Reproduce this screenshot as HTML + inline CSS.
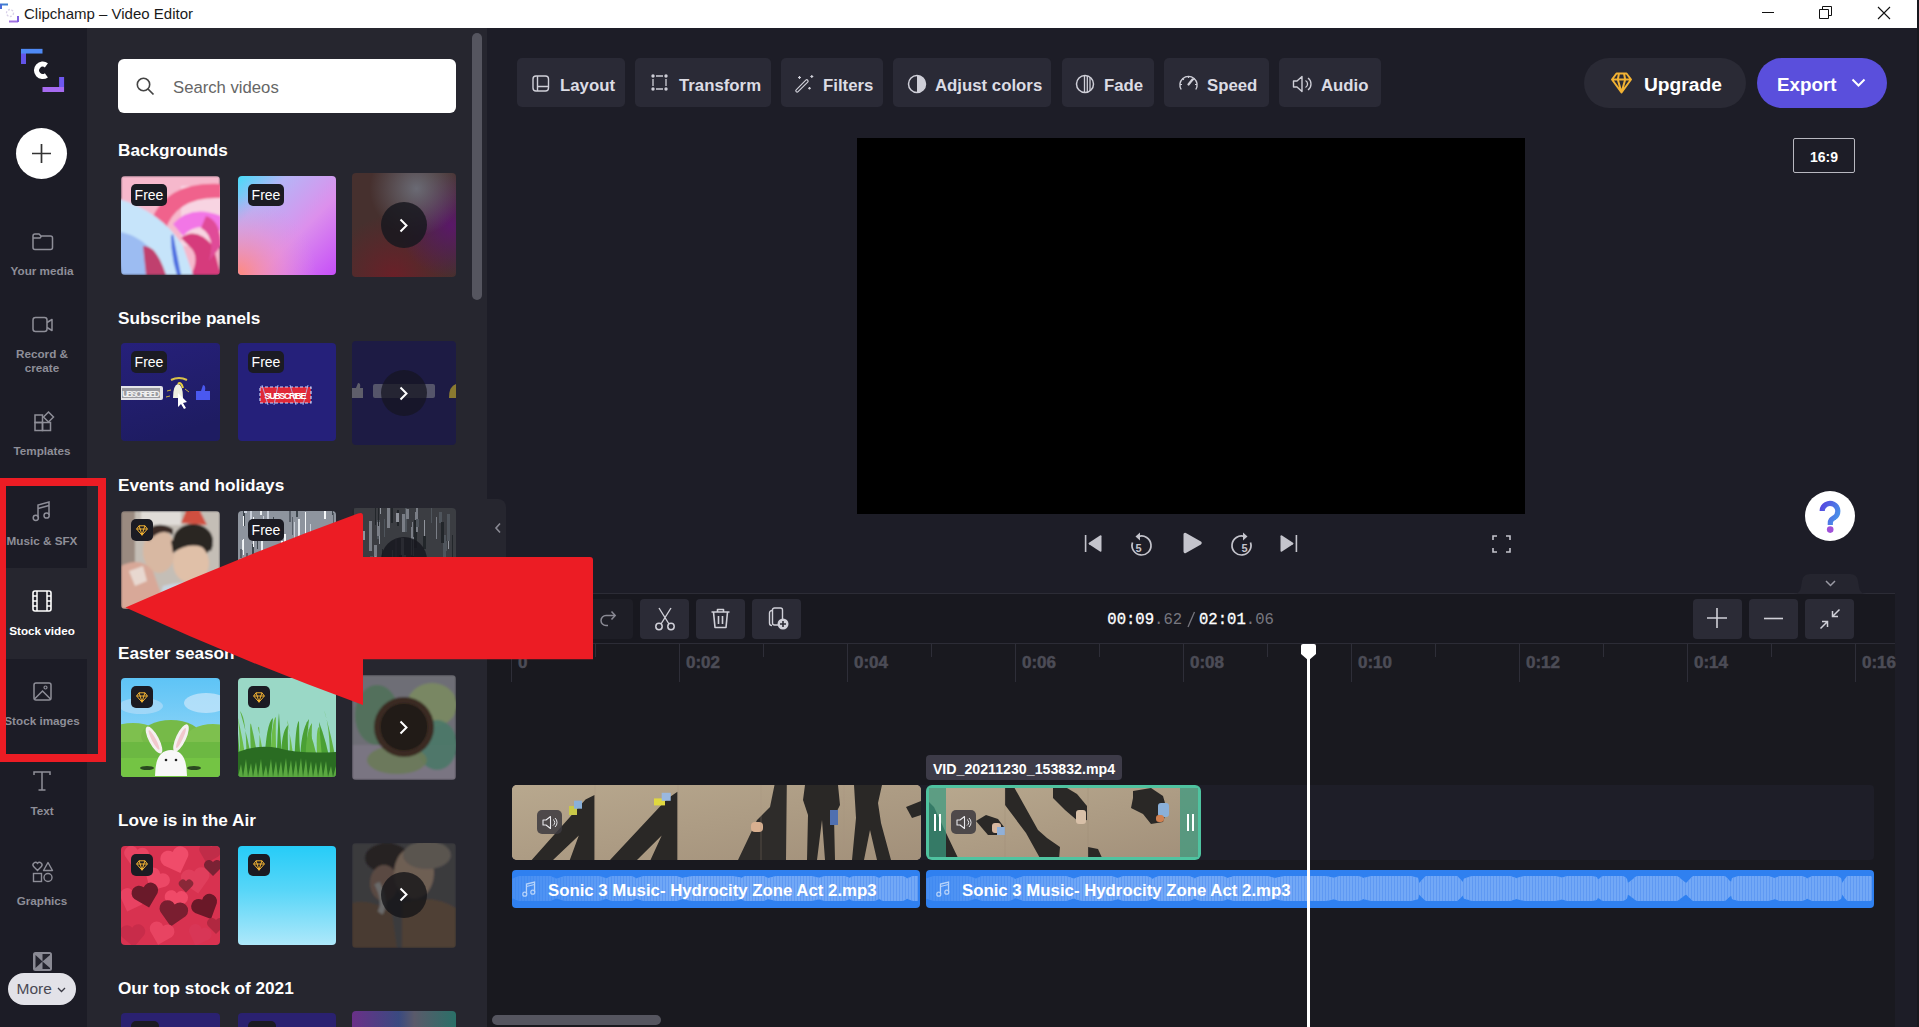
<!DOCTYPE html>
<html><head><meta charset="utf-8">
<style>
*{margin:0;padding:0;box-sizing:border-box}
html,body{width:1919px;height:1027px;overflow:hidden;background:#1e1e28;font-family:"Liberation Sans",sans-serif;position:relative}
.a{position:absolute}
svg{position:absolute;overflow:visible}
#title{left:0;top:0;width:1919px;height:28px;background:#fff}
#nav{left:0;top:28px;width:87px;height:999px;background:#1c1c26}
#panel{left:87px;top:28px;width:400px;height:999px;background:#26262f}
#main{left:487px;top:28px;width:1430px;height:999px;background:#1d1d27}
#tl{left:487px;top:594px;width:1408px;height:433px;background:#19191f}
#edge{left:1917px;top:0;width:2px;height:1027px;background:#18181e}
.nl{left:0;width:84px;text-align:center;font-size:11.7px;font-weight:bold;color:#8e8e98;line-height:14px}
.h{left:118px;font-size:17.2px;font-weight:bold;color:#fff;white-space:nowrap;line-height:20px}
.th{border-radius:4px;overflow:hidden}
.free{position:absolute;left:10px;top:8px;width:36px;height:22px;border-radius:5px;background:#1b1b23;color:#fff;font-size:14px;line-height:22px;text-align:center}
.dia{position:absolute;left:10px;top:8px;width:22px;height:22px;border-radius:5px;background:#1b1b23}
.chev{position:absolute;left:29px;top:29px;width:46px;height:46px;border-radius:50%;background:rgba(24,24,30,.85)}
.tb{top:58px;height:49px;border-radius:5px;background:#2a2a36;color:#dcdce4;font-size:16.8px;font-weight:bold;line-height:49px;white-space:nowrap}
.tb span{position:absolute;top:2.5px}
.rl{top:653px;font-size:17px;font-weight:bold;color:#4c4c56;-webkit-text-stroke:0.5px #4c4c56;line-height:20px}
.tk{width:1px;background:#2e2e38}
.ib{top:599px;width:49px;height:40px;border-radius:4px;background:#2b2b36}
</style></head><body>
<div class="a" id="title"></div>
<div class="a" id="nav"></div>
<div class="a" id="panel"></div>
<div class="a" id="main"></div>
<div class="a" id="tl"></div>
<div class="a" id="edge"></div>
<!-- TITLE BAR -->
<svg style="left:0;top:0" width="20" height="24"><path d="M0 4.5h8" stroke="#3f7fd0" stroke-width="2"/><path d="M1 4v5" stroke="#4a6ad8" stroke-width="2"/><path d="M9 21.5h9" stroke="#a070e0" stroke-width="2"/><path d="M18 16v6" stroke="#8060e0" stroke-width="2"/><circle cx="10" cy="13" r="3.5" fill="none" stroke="#d8d0e8" stroke-width="1.3" stroke-dasharray="2 1.5"/></svg>
<div class="a" style="left:24px;top:5px;font-size:15px;color:#1a1a1a;line-height:17px;white-space:nowrap">Clipchamp – Video Editor</div>
<svg style="left:1762px;top:12px" width="14" height="2"><path d="M0 0.5h12" stroke="#111" stroke-width="1"/></svg>
<svg style="left:1819px;top:6px" width="14" height="14"><path d="M0.5 3.5h9v9h-9z M3.5 3.5v-3h9v9h-3" fill="none" stroke="#111" stroke-width="1"/></svg>
<svg style="left:1878px;top:7px" width="14" height="14"><path d="M0 0L12 12M12 0L0 12" stroke="#111" stroke-width="1.1"/></svg>
<!-- NAV -->
<svg style="left:0;top:0" width="87" height="110">
<path d="M23.5 49v15" stroke="#6254e8" stroke-width="5"/><path d="M21 51.2h21.5" stroke="#4f8af5" stroke-width="4.7"/>
<path d="M61.6 77v15" stroke="#6f58f0" stroke-width="5"/><path d="M42.5 89.5h21.5" stroke="#a66af0" stroke-width="5"/>
<path d="M46.4 65.3A6.2 6.2 0 1 0 46.4 75.3" fill="none" stroke="#fff" stroke-width="5.2"/>
</svg>
<div class="a" style="left:16px;top:128px;width:51px;height:51px;border-radius:50%;background:#fff"></div>
<svg style="left:31px;top:143px" width="22" height="22"><path d="M10.5 1v19M1 10.5h19" stroke="#333" stroke-width="1.7"/></svg>

<svg style="left:32px;top:233px" width="22" height="18"><path d="M1 3a2 2 0 0 1 2-2h4l2 2h9.5a2 2 0 0 1 2 2v9.5a2 2 0 0 1-2 2h-15.5a2 2 0 0 1-2-2z M1 5h7l1.5-2" fill="none" stroke="#8e8e98" stroke-width="1.5"/></svg>
<div class="a nl" style="top:264px">Your media</div>
<svg style="left:32px;top:316px" width="22" height="18"><rect x="1" y="1.5" width="14" height="14" rx="2.5" fill="none" stroke="#8e8e98" stroke-width="1.5"/><path d="M15 6.5l5-3v11l-5-3" fill="none" stroke="#8e8e98" stroke-width="1.5" stroke-linejoin="round"/></svg>
<div class="a nl" style="top:347px">Record &amp;<br>create</div>
<svg style="left:33.5px;top:411px" width="22" height="21"><rect x="1" y="4" width="7.5" height="7.5" fill="none" stroke="#8e8e98" stroke-width="1.5"/><rect x="1" y="11.5" width="7.5" height="8" fill="none" stroke="#8e8e98" stroke-width="1.5"/><rect x="8.5" y="11.5" width="8" height="8" fill="none" stroke="#8e8e98" stroke-width="1.5"/><path d="M14.5 1l5 5-5 5-5-5z" fill="none" stroke="#8e8e98" stroke-width="1.5"/></svg>
<div class="a nl" style="top:444px">Templates</div>

<div class="a" style="left:6px;top:486px;width:81px;height:82px;background:#1c1c26"></div>
<div class="a" style="left:6px;top:568px;width:81px;height:91px;background:#26262f"></div>
<div class="a" style="left:6px;top:659px;width:81px;height:94px;background:#1c1c26"></div>
<svg style="left:32px;top:500px" width="20" height="22"><path d="M6 17.5V5l11-3v13" fill="none" stroke="#8e8e98" stroke-width="1.5"/><path d="M6 8.5l11-3" stroke="#8e8e98" stroke-width="1.5"/><circle cx="3.8" cy="17.8" r="2.6" fill="none" stroke="#8e8e98" stroke-width="1.5"/><circle cx="14.6" cy="15.5" r="2.6" fill="none" stroke="#8e8e98" stroke-width="1.5"/></svg>
<div class="a nl" style="top:534px">Music &amp; SFX</div>
<svg style="left:32px;top:590px" width="20" height="22"><rect x="1" y="1" width="18" height="20" rx="2" fill="none" stroke="#fff" stroke-width="1.6"/><path d="M5 1v20M15 1v20M1 6h4M1 11h4M1 16h4M15 6h4M15 11h4M15 16h4" stroke="#fff" stroke-width="1.5"/></svg>
<div class="a nl" style="top:624px;color:#fff">Stock video</div>
<svg style="left:33px;top:682px" width="19" height="19"><rect x="1" y="1" width="17" height="17" rx="2" fill="none" stroke="#8e8e98" stroke-width="1.5"/><path d="M1.5 17l8-8 8 8" fill="none" stroke="#8e8e98" stroke-width="1.5"/><circle cx="12.5" cy="5.5" r="1.5" fill="none" stroke="#8e8e98" stroke-width="1.2"/></svg>
<div class="a nl" style="top:714px">Stock images</div>
<!-- red rectangle -->
<div class="a" style="left:-2px;top:478px;width:108px;height:284px;border:8px solid #ec1c24"></div>

<svg style="left:33px;top:771px" width="18" height="20"><path d="M1 4V1h16v3M9 1v18M5.5 19h7" fill="none" stroke="#8e8e98" stroke-width="1.5"/></svg>
<div class="a nl" style="top:804px">Text</div>
<svg style="left:32px;top:861px" width="22" height="22"><path d="M5.5 9.5L1.6 5.6A2.3 2.3 0 0 1 5.5 2.4 2.3 2.3 0 0 1 9.4 5.6z" fill="none" stroke="#8e8e98" stroke-width="1.4"/><path d="M16 1.5l4.5 8h-9z" fill="none" stroke="#8e8e98" stroke-width="1.4" stroke-linejoin="round"/><rect x="1.5" y="12.5" width="8" height="8" fill="none" stroke="#8e8e98" stroke-width="1.4"/><circle cx="16" cy="16.5" r="4" fill="none" stroke="#8e8e98" stroke-width="1.4"/></svg>
<div class="a nl" style="top:894px">Graphics</div>
<svg style="left:32px;top:951px" width="21" height="21"><rect x="1" y="1" width="19" height="19" rx="2.5" fill="#8a8a94"/><rect x="10.5" y="3" width="7.5" height="15" fill="#24242e"/><path d="M3.5 4l7 6.5-7 6.5z" fill="#24242e"/><path d="M18 4l-7.5 6.5L18 17z" fill="#8a8a94"/></svg>
<div class="a" style="left:8px;top:973px;width:68px;height:32px;border-radius:16px;background:#e2e2e8;color:#4a4a54;font-size:15.5px;line-height:32px;padding-left:8.5px">More</div>
<svg style="left:57px;top:987px" width="9" height="6"><path d="M1 1l3.5 3.5L8 1" fill="none" stroke="#3a3a44" stroke-width="1.3"/></svg>
<!-- PANEL CONTENT -->
<!--PN-->
<div class="a" style="left:118px;top:59px;width:338px;height:54px;border-radius:6px;background:#fff"></div>
<svg style="left:136px;top:77px" width="20" height="20"><circle cx="7.5" cy="7.5" r="6.2" fill="none" stroke="#444" stroke-width="1.6"/><path d="M12 12l5.5 5.5" stroke="#444" stroke-width="1.7"/></svg>
<div class="a" style="left:173px;top:78px;font-size:16.7px;color:#666;line-height:20px;white-space:nowrap">Search videos</div>
<div class="a" style="left:472px;top:33px;width:10px;height:267px;border-radius:5px;background:#55555f"></div>
<div class="a h" style="top:140px">Backgrounds</div>
<div class="a h" style="top:308px">Subscribe panels</div>
<div class="a h" style="top:475px">Events and holidays</div>
<div class="a h" style="top:643px">Easter season</div>
<div class="a h" style="top:810px">Love is in the Air</div>
<div class="a h" style="top:978px">Our top stock of 2021</div>
<div class="a th" style="left:121px;top:176px;width:99px;height:99px"><svg style="left:0;top:0" width="99" height="99" viewBox="0 0 99 99"><defs><filter id="b1" x="-10%" y="-10%" width="120%" height="120%"><feGaussianBlur stdDeviation="1.2"/></filter></defs><g filter="url(#b1)"><rect width="99" height="99" fill="#f6b8cc"/>
<rect x="60" y="10" width="45" height="60" fill="#f8d4e2"/>
<path d="M30 45 Q45 5 100 8 L100 22 Q55 20 44 55z" fill="#f0628c"/>
<path d="M52 48 Q70 28 100 40 L100 55 Q75 45 62 60z" fill="#f276e6"/>
<path d="M60 62 Q75 50 92 70 L100 99 L70 99 Q80 80 68 70z" fill="#d63a7c"/>
<path d="M-5 22 Q40 35 62 70 L72 99 L40 99 Q35 70 -5 55z" fill="#c6e4fa"/>
<path d="M-5 55 Q30 60 45 99 L0 99z" fill="#9cbcf2"/>
<path d="M22 70 Q35 68 45 99 L25 99z" fill="#c0406e"/>
<path d="M52 58 L60 99 L56 99 Q50 80 50 60z" fill="#4e6ee0"/>
<path d="M85 40 Q100 45 100 70 L88 85 Q95 60 80 52z" fill="#e04c98"/></g></svg><div class="free">Free</div></div>
<div class="a th" style="left:238px;top:176px;width:98px;height:99px"><svg style="left:0;top:0" width="98" height="99" viewBox="0 0 98 99"><defs><linearGradient id="g2a" x1="0" y1="0" x2="1" y2="1"><stop offset="0" stop-color="#46dcf8"/><stop offset="0.25" stop-color="#b6b4f6"/><stop offset="0.6" stop-color="#dc90ec"/><stop offset="1" stop-color="#c64ef8"/></linearGradient>
<radialGradient id="g2b" cx="0" cy="1" r="0.8"><stop offset="0" stop-color="#ff8a7c"/><stop offset="0.6" stop-color="#f090c8" stop-opacity="0.5"/><stop offset="1" stop-color="#e090e0" stop-opacity="0"/></radialGradient></defs>
<rect width="98" height="99" fill="url(#g2a)"/><rect width="98" height="99" fill="url(#g2b)"/></svg><div class="free">Free</div></div>
<div class="a th" style="left:352px;top:173px;width:104px;height:104px"><svg style="left:0;top:0" width="104" height="104" viewBox="0 0 104 104"><defs><radialGradient id="g3a" cx="0.62" cy="0.15" r="0.45"><stop offset="0" stop-color="#6a6a74"/><stop offset="1" stop-color="#6a6a74" stop-opacity="0"/></radialGradient>
<radialGradient id="g3b" cx="0.95" cy="0.5" r="0.5"><stop offset="0" stop-color="#5a1868"/><stop offset="1" stop-color="#5a1868" stop-opacity="0"/></radialGradient>
<radialGradient id="g3c" cx="0.4" cy="1" r="0.6"><stop offset="0" stop-color="#6a2028"/><stop offset="1" stop-color="#6a2028" stop-opacity="0"/></radialGradient></defs>
<rect width="104" height="104" fill="#46302e"/><rect width="104" height="104" fill="url(#g3c)"/><rect width="104" height="104" fill="url(#g3b)"/><rect width="104" height="104" fill="url(#g3a)"/></svg><div class="chev"></div></div>
<svg style="left:399px;top:218px" width="10" height="15"><path d="M1.5 1.5l6 6-6 6" fill="none" stroke="#fff" stroke-width="2"/></svg>
<div class="a th" style="left:121px;top:343px;width:99px;height:98px"><svg style="left:0;top:0" width="99" height="98" viewBox="0 0 99 98"><defs><linearGradient id="s1" x1="0" y1="0" x2="0.3" y2="1"><stop offset="0" stop-color="#26207a"/><stop offset="1" stop-color="#1e1c62"/></linearGradient></defs>
<rect width="99" height="98" fill="url(#s1)"/>
<rect x="-2" y="43" width="44" height="14" rx="2" fill="#e4e4e8"/><rect x="1" y="45" width="38" height="10" fill="#9a9aa0"/>
<text x="20" y="54" font-family="Liberation Sans" font-weight="bold" font-size="9" fill="#f0f0f0" text-anchor="middle" textLength="38">UBSCRIBED</text>
<path d="M50 37 Q58 33 66 37" fill="none" stroke="#d8c048" stroke-width="2"/>
<path d="M52 55 Q52 42 57 41 Q62 42 62 55z" fill="#f0f0e0"/><path d="M57 41 Q60 38 62 45" fill="none" stroke="#e8d040" stroke-width="2"/>
<path d="M57 50 L57 64 L60 61 L63 66 L65 65 L62 60 L66 59z" fill="#fff"/>
<path d="M46 48l4-1M64 46l4 3M45 54l4-1" stroke="#c8b040" stroke-width="1"/>
<path d="M75 48 h5 l2-6 q3 0 2 6 h5 v9 h-14z" fill="#4a58f0"/></svg><div class="free">Free</div></div>
<div class="a th" style="left:238px;top:343px;width:98px;height:98px"><svg style="left:0;top:0" width="98" height="98" viewBox="0 0 98 98"><rect width="98" height="98" fill="#25207a"/>
<rect x="22" y="44" width="51" height="16" fill="#e02838" stroke="#c8d8ff" stroke-width="1.2" stroke-dasharray="3 2"/>
<path d="M24 42l6 20M40 42l-4 20M52 42l6 20M70 42l-5 20" stroke="#b0c8ff" stroke-width="0.8"/>
<text x="47.5" y="56" font-family="Liberation Sans" font-weight="bold" font-size="9" fill="#fff" text-anchor="middle" textLength="42">SUBSCRIBE</text></svg><div class="free">Free</div></div>
<div class="a th" style="left:352px;top:341px;width:104px;height:104px"><svg style="left:0;top:0" width="104" height="104" viewBox="0 0 104 104"><rect width="104" height="104" fill="#1d1b44"/>
<path d="M0 47h4l2-5q3 0 2 5h3v10h-11z" fill="#5e5e6a"/>
<rect x="21" y="43" width="62" height="14" rx="2" fill="#55556a"/>
<path d="M97 57 Q97 45 104 43 V57z" fill="#8a7a30"/></svg><div class="chev" style="background:rgba(22,22,34,.75)"></div></div>
<svg style="left:399px;top:386px" width="10" height="15"><path d="M1.5 1.5l6 6-6 6" fill="none" stroke="#fff" stroke-width="2"/></svg>
<div class="a th" style="left:121px;top:511px;width:99px;height:98px"><svg style="left:0;top:0" width="99" height="98" viewBox="0 0 99 98"><defs><filter id="b4" x="-10%" y="-10%" width="120%" height="120%"><feGaussianBlur stdDeviation="1.0"/></filter></defs><g filter="url(#b4)"><rect width="99" height="98" fill="#c4beb6"/>
<rect x="0" y="0" width="14" height="98" fill="#9a8a80"/><rect x="20" y="0" width="40" height="14" fill="#e0dcd8"/>
<path d="M65 0 L78 -2 L86 14 L60 12z" fill="#d05040"/>
<ellipse cx="38" cy="40" rx="16" ry="22" fill="#d8b8a2"/>
<path d="M24 22 Q35 8 52 18 L52 24 Q40 16 28 30z" fill="#3a2c28"/>
<ellipse cx="72" cy="30" rx="20" ry="17" fill="#2c2624"/>
<ellipse cx="70" cy="52" rx="18" ry="20" fill="#e0c0a8"/>
<path d="M50 30 Q72 18 92 34 L90 40 Q70 28 52 42z" fill="#2c2624"/>
<path d="M42 75 Q65 68 90 78 L99 98 L35 98z" fill="#c8d4e0"/>
<path d="M0 55 Q20 45 32 60 L45 98 L0 98z" fill="#d8a898"/>
<path d="M8 60 L22 55 L26 70 L14 75z" fill="#e8d8d0"/></g></svg><div class="dia"><svg style="left:5px;top:5.5px" width="12" height="11"><path d="M3 0.8h6l2.4 3.2L6 10.2 0.6 4z M0.6 4h10.8 M3 0.8l1.2 3.2L6 10.2 7.8 4 9 0.8" fill="none" stroke="#f2b233" stroke-width="1" stroke-linejoin="round"/></svg></div></div>
<div class="a th" style="left:238px;top:511px;width:98px;height:98px"><svg style="left:0;top:0" width="98" height="98" viewBox="0 0 98 98"><defs><filter id="b5" x="-10%" y="-10%" width="120%" height="120%"><feGaussianBlur stdDeviation="0.7"/></filter></defs><g filter="url(#b5)"><rect width="98" height="98" fill="#8e949e"/><rect x="30" y="65" width="2" height="19" fill="#3e444e"/><rect x="60" y="70" width="1" height="27" fill="#e8ecf0"/><rect x="60" y="23" width="2" height="14" fill="#f4f6f8"/><rect x="69" y="60" width="3" height="20" fill="#c8ced8"/><rect x="29" y="71" width="2" height="24" fill="#f4f6f8"/><rect x="94" y="-9" width="1" height="13" fill="#3e444e"/><rect x="5" y="28" width="1" height="16" fill="#f4f6f8"/><rect x="76" y="82" width="3" height="30" fill="#f4f6f8"/><rect x="50" y="83" width="3" height="12" fill="#5a606a"/><rect x="12" y="-6" width="2" height="23" fill="#c8ced8"/><rect x="33" y="76" width="3" height="28" fill="#5a606a"/><rect x="53" y="54" width="3" height="26" fill="#5a606a"/><rect x="68" y="64" width="3" height="26" fill="#c8ced8"/><rect x="43" y="77" width="1" height="16" fill="#3e444e"/><rect x="85" y="79" width="2" height="30" fill="#5a606a"/><rect x="69" y="63" width="1" height="30" fill="#c8ced8"/><rect x="81" y="63" width="2" height="17" fill="#e8ecf0"/><rect x="8" y="51" width="3" height="10" fill="#5a606a"/><rect x="8" y="42" width="2" height="8" fill="#5a606a"/><rect x="54" y="88" width="3" height="11" fill="#e8ecf0"/><rect x="77" y="68" width="1" height="20" fill="#3e444e"/><rect x="42" y="60" width="2" height="24" fill="#c8ced8"/><rect x="4" y="29" width="1" height="10" fill="#e8ecf0"/><rect x="76" y="58" width="1" height="14" fill="#f4f6f8"/><rect x="37" y="68" width="2" height="12" fill="#e8ecf0"/><rect x="43" y="30" width="2" height="12" fill="#f4f6f8"/><rect x="48" y="48" width="3" height="28" fill="#3e444e"/><rect x="87" y="61" width="1" height="27" fill="#3e444e"/><rect x="34" y="45" width="2" height="17" fill="#f4f6f8"/><rect x="33" y="56" width="2" height="25" fill="#5a606a"/><rect x="1" y="90" width="3" height="26" fill="#5a606a"/><rect x="2" y="38" width="2" height="9" fill="#5a606a"/><rect x="59" y="35" width="2" height="27" fill="#5a606a"/><rect x="94" y="52" width="1" height="26" fill="#e8ecf0"/><rect x="86" y="-8" width="2" height="16" fill="#f4f6f8"/><rect x="38" y="65" width="2" height="13" fill="#5a606a"/><rect x="23" y="30" width="2" height="27" fill="#5a606a"/><rect x="38" y="90" width="3" height="11" fill="#e8ecf0"/><rect x="72" y="77" width="2" height="17" fill="#3e444e"/><rect x="28" y="73" width="2" height="15" fill="#5a606a"/><rect x="23" y="76" width="3" height="28" fill="#e8ecf0"/><rect x="13" y="66" width="2" height="18" fill="#c8ced8"/><rect x="56" y="11" width="1" height="18" fill="#c8ced8"/><rect x="72" y="47" width="2" height="15" fill="#e8ecf0"/><rect x="4" y="57" width="2" height="18" fill="#3e444e"/><rect x="23" y="25" width="2" height="28" fill="#e8ecf0"/><rect x="79" y="34" width="2" height="21" fill="#5a606a"/><rect x="66" y="24" width="3" height="19" fill="#f4f6f8"/><rect x="37" y="43" width="3" height="9" fill="#f4f6f8"/><rect x="19" y="15" width="1" height="23" fill="#3e444e"/><rect x="65" y="45" width="2" height="9" fill="#f4f6f8"/><rect x="96" y="74" width="2" height="25" fill="#5a606a"/><rect x="29" y="-2" width="2" height="11" fill="#c8ced8"/><rect x="5" y="-6" width="2" height="21" fill="#3e444e"/><rect x="6" y="-9" width="3" height="11" fill="#c8ced8"/><rect x="64" y="28" width="2" height="29" fill="#e8ecf0"/><rect x="67" y="58" width="3" height="9" fill="#3e444e"/><rect x="14" y="33" width="2" height="16" fill="#3e444e"/><rect x="61" y="90" width="1" height="19" fill="#c8ced8"/><rect x="25" y="5" width="1" height="13" fill="#c8ced8"/><rect x="35" y="6" width="1" height="23" fill="#3e444e"/><rect x="51" y="-4" width="2" height="15" fill="#5a606a"/><rect x="79" y="57" width="3" height="9" fill="#f4f6f8"/><rect x="41" y="89" width="1" height="9" fill="#c8ced8"/><rect x="5" y="5" width="1" height="10" fill="#f4f6f8"/><rect x="4" y="81" width="1" height="24" fill="#3e444e"/><rect x="62" y="30" width="2" height="18" fill="#e8ecf0"/><rect x="44" y="39" width="3" height="26" fill="#5a606a"/><rect x="46" y="23" width="2" height="18" fill="#f4f6f8"/><rect x="15" y="6" width="1" height="30" fill="#f4f6f8"/><rect x="10" y="62" width="2" height="9" fill="#5a606a"/><rect x="58" y="67" width="3" height="28" fill="#e8ecf0"/><rect x="79" y="45" width="1" height="19" fill="#f4f6f8"/><rect x="97" y="79" width="2" height="21" fill="#f4f6f8"/><rect x="58" y="-8" width="2" height="14" fill="#3e444e"/><rect x="34" y="78" width="1" height="21" fill="#c8ced8"/><rect x="54" y="6" width="1" height="18" fill="#5a606a"/><rect x="71" y="23" width="1" height="22" fill="#e8ecf0"/><rect x="93" y="74" width="3" height="29" fill="#e8ecf0"/><rect x="93" y="30" width="1" height="26" fill="#e8ecf0"/><rect x="60" y="8" width="2" height="20" fill="#e8ecf0"/><rect x="67" y="1" width="1" height="29" fill="#f4f6f8"/><rect x="22" y="-7" width="2" height="11" fill="#e8ecf0"/><rect x="14" y="76" width="3" height="30" fill="#5a606a"/><rect x="74" y="28" width="1" height="9" fill="#3e444e"/><rect x="65" y="57" width="2" height="11" fill="#3e444e"/><rect x="95" y="2" width="1" height="25" fill="#5a606a"/><rect x="72" y="13" width="1" height="15" fill="#c8ced8"/><rect x="82" y="21" width="3" height="27" fill="#f4f6f8"/><rect x="32" y="37" width="3" height="19" fill="#3e444e"/></g></svg><div class="free">Free</div></div>
<div class="a th" style="left:352px;top:508px;width:104px;height:104px"><svg style="left:0;top:0" width="104" height="104" viewBox="0 0 104 104"><defs><filter id="b6" x="-10%" y="-10%" width="120%" height="120%"><feGaussianBlur stdDeviation="0.7"/></filter></defs><g filter="url(#b6)"><rect width="104" height="104" fill="#3a3c42"/><rect x="53" y="0" width="2" height="24" fill="#50545c"/><rect x="52" y="85" width="1" height="21" fill="#24262a"/><rect x="19" y="72" width="2" height="12" fill="#50545c"/><rect x="12" y="53" width="3" height="23" fill="#24262a"/><rect x="75" y="82" width="1" height="12" fill="#90949c"/><rect x="96" y="15" width="1" height="26" fill="#90949c"/><rect x="29" y="78" width="3" height="17" fill="#24262a"/><rect x="76" y="64" width="3" height="16" fill="#50545c"/><rect x="39" y="-8" width="2" height="23" fill="#24262a"/><rect x="25" y="12" width="3" height="19" fill="#50545c"/><rect x="41" y="51" width="1" height="21" fill="#24262a"/><rect x="89" y="66" width="1" height="22" fill="#7a7e86"/><rect x="61" y="82" width="1" height="20" fill="#7a7e86"/><rect x="59" y="19" width="1" height="28" fill="#7a7e86"/><rect x="27" y="22" width="1" height="14" fill="#90949c"/><rect x="17" y="13" width="3" height="30" fill="#7a7e86"/><rect x="32" y="11" width="1" height="18" fill="#50545c"/><rect x="54" y="1" width="3" height="10" fill="#7a7e86"/><rect x="11" y="23" width="2" height="9" fill="#90949c"/><rect x="57" y="64" width="3" height="29" fill="#90949c"/><rect x="0" y="-7" width="2" height="18" fill="#24262a"/><rect x="48" y="52" width="1" height="14" fill="#24262a"/><rect x="50" y="6" width="3" height="18" fill="#7a7e86"/><rect x="35" y="-1" width="3" height="21" fill="#7a7e86"/><rect x="56" y="57" width="2" height="11" fill="#90949c"/><rect x="86" y="88" width="2" height="22" fill="#90949c"/><rect x="84" y="76" width="3" height="28" fill="#90949c"/><rect x="13" y="86" width="2" height="29" fill="#7a7e86"/><rect x="85" y="53" width="3" height="19" fill="#7a7e86"/><rect x="91" y="27" width="3" height="26" fill="#50545c"/><rect x="82" y="72" width="3" height="28" fill="#50545c"/><rect x="22" y="37" width="3" height="22" fill="#7a7e86"/><rect x="13" y="61" width="1" height="18" fill="#24262a"/><rect x="71" y="28" width="3" height="13" fill="#24262a"/><rect x="61" y="29" width="1" height="30" fill="#7a7e86"/><rect x="13" y="81" width="1" height="25" fill="#24262a"/><rect x="45" y="2" width="2" height="16" fill="#24262a"/><rect x="6" y="7" width="1" height="23" fill="#90949c"/><rect x="31" y="79" width="3" height="19" fill="#90949c"/><rect x="51" y="47" width="3" height="10" fill="#90949c"/><rect x="63" y="4" width="1" height="16" fill="#7a7e86"/><rect x="87" y="4" width="3" height="11" fill="#50545c"/><rect x="89" y="14" width="3" height="21" fill="#24262a"/><rect x="95" y="6" width="3" height="27" fill="#50545c"/><rect x="50" y="92" width="1" height="25" fill="#50545c"/><rect x="72" y="12" width="1" height="16" fill="#90949c"/><rect x="100" y="27" width="1" height="22" fill="#24262a"/><rect x="49" y="30" width="3" height="26" fill="#90949c"/><rect x="81" y="53" width="3" height="29" fill="#90949c"/><rect x="85" y="51" width="1" height="27" fill="#50545c"/><rect x="93" y="71" width="1" height="11" fill="#50545c"/><rect x="62" y="12" width="3" height="28" fill="#24262a"/><rect x="25" y="14" width="3" height="14" fill="#7a7e86"/><rect x="64" y="72" width="2" height="11" fill="#90949c"/><rect x="84" y="9" width="1" height="22" fill="#7a7e86"/><rect x="79" y="-4" width="1" height="19" fill="#50545c"/><rect x="64" y="-1" width="2" height="25" fill="#7a7e86"/><rect x="43" y="31" width="2" height="19" fill="#50545c"/><rect x="10" y="66" width="1" height="30" fill="#7a7e86"/><rect x="94" y="33" width="1" height="10" fill="#50545c"/><rect x="55" y="79" width="1" height="23" fill="#90949c"/><rect x="13" y="90" width="1" height="21" fill="#7a7e86"/><rect x="25" y="80" width="1" height="20" fill="#24262a"/><rect x="60" y="79" width="1" height="25" fill="#24262a"/><rect x="26" y="73" width="2" height="17" fill="#7a7e86"/><rect x="59" y="48" width="3" height="20" fill="#24262a"/><rect x="23" y="48" width="1" height="16" fill="#90949c"/><rect x="47" y="47" width="3" height="19" fill="#24262a"/><rect x="28" y="-10" width="1" height="16" fill="#90949c"/><rect x="18" y="48" width="3" height="14" fill="#50545c"/><rect x="26" y="-8" width="1" height="26" fill="#24262a"/><rect x="64" y="11" width="3" height="8" fill="#50545c"/><rect x="14" y="67" width="1" height="22" fill="#24262a"/><rect x="23" y="-3" width="1" height="20" fill="#24262a"/><rect x="40" y="42" width="1" height="30" fill="#7a7e86"/><rect x="30" y="41" width="1" height="20" fill="#24262a"/><rect x="3" y="18" width="1" height="11" fill="#24262a"/><rect x="60" y="14" width="1" height="18" fill="#7a7e86"/><rect x="44" y="5" width="3" height="9" fill="#90949c"/><rect x="35" y="90" width="2" height="17" fill="#24262a"/></g></svg><div class="chev"></div></div>
<div class="a th" style="left:121px;top:678px;width:99px;height:99px"><svg style="left:0;top:0" width="99" height="99" viewBox="0 0 99 99"><defs><linearGradient id="e1" x1="0" y1="0" x2="0" y2="1"><stop offset="0" stop-color="#5ec4f6"/><stop offset="1" stop-color="#a6dcf8"/></linearGradient></defs>
<rect width="99" height="99" fill="url(#e1)"/>
<ellipse cx="85" cy="25" rx="22" ry="10" fill="#c0e4fa" opacity="0.8"/><ellipse cx="20" cy="28" rx="22" ry="8" fill="#b0dcf8" opacity="0.7"/>
<ellipse cx="12" cy="60" rx="30" ry="15" fill="#7ec04e"/><ellipse cx="50" cy="58" rx="30" ry="16" fill="#76ba48"/><ellipse cx="92" cy="62" rx="28" ry="16" fill="#7ec04e"/>
<rect y="64" width="99" height="35" fill="#6cb842"/>
<rect y="80" width="99" height="19" fill="#74c444"/>
<ellipse cx="33" cy="62" rx="5" ry="15" transform="rotate(-28 33 62)" fill="#f4f0f0"/><ellipse cx="60" cy="60" rx="5" ry="15" transform="rotate(25 60 60)" fill="#f4f0f0"/>
<ellipse cx="33" cy="62" rx="2" ry="11" transform="rotate(-28 33 62)" fill="#f0c8cc"/><ellipse cx="60" cy="60" rx="2" ry="11" transform="rotate(25 60 60)" fill="#f0c8cc"/>
<path d="M34 98 Q34 72 50 72 Q66 72 66 98z" fill="#f8f8f8"/>
<circle cx="45" cy="82" r="1.3" fill="#222"/><circle cx="55" cy="82" r="1.3" fill="#222"/>
<ellipse cx="26" cy="90" rx="7" ry="2" fill="#2a4a20"/><ellipse cx="73" cy="90" rx="7" ry="2" fill="#2a4a20"/></svg><div class="dia"><svg style="left:5px;top:5.5px" width="12" height="11"><path d="M3 0.8h6l2.4 3.2L6 10.2 0.6 4z M0.6 4h10.8 M3 0.8l1.2 3.2L6 10.2 7.8 4 9 0.8" fill="none" stroke="#f2b233" stroke-width="1" stroke-linejoin="round"/></svg></div></div>
<div class="a th" style="left:238px;top:678px;width:98px;height:99px"><svg style="left:0;top:0" width="98" height="99" viewBox="0 0 98 99"><rect width="98" height="99" fill="#9ad8c6"/><path d="M-4 99 Q-5 57 -2 30 Q1 70 4 99z" fill="#4aa034"/><path d="M2 99 Q3 50 -2 31 Q7 70 10 99z" fill="#6cbc48"/><path d="M8 99 Q10 42 2 33 Q13 70 16 99z" fill="#5eb040"/><path d="M14 99 Q11 40 13 46 Q19 70 22 99z" fill="#5eb040"/><path d="M20 99 Q23 41 20 50 Q25 70 28 99z" fill="#6cbc48"/><path d="M26 99 Q27 46 35 40 Q31 70 34 99z" fill="#4aa034"/><path d="M32 99 Q33 41 38 39 Q37 70 40 99z" fill="#6cbc48"/><path d="M38 99 Q40 42 41 35 Q43 70 46 99z" fill="#4aa034"/><path d="M44 99 Q41 56 50 47 Q49 70 52 99z" fill="#4aa034"/><path d="M50 99 Q54 52 49 42 Q55 70 58 99z" fill="#6cbc48"/><path d="M56 99 Q57 45 61 43 Q61 70 64 99z" fill="#4aa034"/><path d="M62 99 Q61 54 71 41 Q67 70 70 99z" fill="#4aa034"/><path d="M68 99 Q66 56 74 45 Q73 70 76 99z" fill="#5eb040"/><path d="M74 99 Q72 45 68 44 Q79 70 82 99z" fill="#5eb040"/><path d="M80 99 Q77 50 81 49 Q85 70 88 99z" fill="#6cbc48"/><path d="M86 99 Q82 59 81 44 Q91 70 94 99z" fill="#4aa034"/><path d="M92 99 Q93 51 86 32 Q97 70 100 99z" fill="#5eb040"/><path d="M0 74 Q20 66 40 70 Q60 76 98 74 V99 H0z" fill="#2a6c22"/><path d="M0 99 L3 86 L5 99z" fill="#5aa840"/><path d="M5 99 L8 81 L10 99z" fill="#5aa840"/><path d="M10 99 L13 85 L15 99z" fill="#5aa840"/><path d="M15 99 L18 84 L20 99z" fill="#5aa840"/><path d="M20 99 L23 81 L25 99z" fill="#5aa840"/><path d="M25 99 L28 87 L30 99z" fill="#5aa840"/><path d="M30 99 L33 81 L35 99z" fill="#5aa840"/><path d="M35 99 L38 83 L40 99z" fill="#5aa840"/><path d="M40 99 L43 83 L45 99z" fill="#5aa840"/><path d="M45 99 L48 80 L50 99z" fill="#5aa840"/><path d="M50 99 L53 82 L55 99z" fill="#5aa840"/><path d="M55 99 L58 82 L60 99z" fill="#5aa840"/><path d="M60 99 L63 80 L65 99z" fill="#5aa840"/><path d="M65 99 L68 81 L70 99z" fill="#5aa840"/><path d="M70 99 L73 83 L75 99z" fill="#5aa840"/><path d="M75 99 L78 84 L80 99z" fill="#5aa840"/><path d="M80 99 L83 83 L85 99z" fill="#5aa840"/><path d="M85 99 L88 83 L90 99z" fill="#5aa840"/><path d="M90 99 L93 88 L95 99z" fill="#5aa840"/><path d="M95 99 L98 88 L100 99z" fill="#5aa840"/></svg><div class="dia"><svg style="left:5px;top:5.5px" width="12" height="11"><path d="M3 0.8h6l2.4 3.2L6 10.2 0.6 4z M0.6 4h10.8 M3 0.8l1.2 3.2L6 10.2 7.8 4 9 0.8" fill="none" stroke="#f2b233" stroke-width="1" stroke-linejoin="round"/></svg></div></div>
<div class="a th" style="left:352px;top:675px;width:104px;height:105px"><svg style="left:0;top:0" width="104" height="105" viewBox="0 0 104 105"><defs><filter id="b7" x="-10%" y="-10%" width="120%" height="120%"><feGaussianBlur stdDeviation="0.8"/></filter></defs><g filter="url(#b7)"><rect width="104" height="105" fill="#6e6e76"/>
<rect y="70" width="104" height="35" fill="#7a7482"/>
<ellipse cx="25" cy="40" rx="22" ry="30" fill="#50705a" opacity="0.9"/><ellipse cx="80" cy="30" rx="25" ry="22" fill="#7a8a62" opacity="0.9"/>
<ellipse cx="85" cy="70" rx="20" ry="25" fill="#4a7868" opacity="0.9"/><ellipse cx="45" cy="85" rx="30" ry="14" fill="#6a7a58" opacity="0.9"/>
<circle cx="52" cy="52" r="30" fill="#3a2a22"/><circle cx="52" cy="52" r="24" fill="#2a201c"/></g></svg><div class="chev" style="background:rgba(26,22,20,.55)"></div></div>
<svg style="left:399px;top:720px" width="10" height="15"><path d="M1.5 1.5l6 6-6 6" fill="none" stroke="#fff" stroke-width="2"/></svg>
<div class="a th" style="left:121px;top:846px;width:99px;height:99px"><svg style="left:0;top:0" width="99" height="99" viewBox="0 0 99 99"><rect width="99" height="99" fill="#d83250"/><path transform="translate(15 12) rotate(10) scale(1.4)" d="M0 8 L-8 0 A4.5 4.5 0 0 1 0 -6 A4.5 4.5 0 0 1 8 0z" fill="#e84462"/><path transform="translate(55 15) rotate(-20) scale(1.6)" d="M0 8 L-8 0 A4.5 4.5 0 0 1 0 -6 A4.5 4.5 0 0 1 8 0z" fill="#f04c6a"/><path transform="translate(88 8) rotate(15) scale(1.2)" d="M0 8 L-8 0 A4.5 4.5 0 0 1 0 -6 A4.5 4.5 0 0 1 8 0z" fill="#c02c48"/><path transform="translate(35 35) rotate(30) scale(1.4)" d="M0 8 L-8 0 A4.5 4.5 0 0 1 0 -6 A4.5 4.5 0 0 1 8 0z" fill="#ec4866"/><path transform="translate(75 35) rotate(-10) scale(1.6)" d="M0 8 L-8 0 A4.5 4.5 0 0 1 0 -6 A4.5 4.5 0 0 1 8 0z" fill="#e03e5c"/><path transform="translate(92 22) rotate(0) scale(1.0)" d="M0 8 L-8 0 A4.5 4.5 0 0 1 0 -6 A4.5 4.5 0 0 1 8 0z" fill="#7a2234"/><path transform="translate(10 55) rotate(20) scale(1.4)" d="M0 8 L-8 0 A4.5 4.5 0 0 1 0 -6 A4.5 4.5 0 0 1 8 0z" fill="#e84262"/><path transform="translate(25 50) rotate(-15) scale(1.5)" d="M0 8 L-8 0 A4.5 4.5 0 0 1 0 -6 A4.5 4.5 0 0 1 8 0z" fill="#6a1a2a"/><path transform="translate(55 55) rotate(5) scale(1.3)" d="M0 8 L-8 0 A4.5 4.5 0 0 1 0 -6 A4.5 4.5 0 0 1 8 0z" fill="#f04a68"/><path transform="translate(52 68) rotate(10) scale(1.6)" d="M0 8 L-8 0 A4.5 4.5 0 0 1 0 -6 A4.5 4.5 0 0 1 8 0z" fill="#7a1e30"/><path transform="translate(85 62) rotate(-25) scale(1.5)" d="M0 8 L-8 0 A4.5 4.5 0 0 1 0 -6 A4.5 4.5 0 0 1 8 0z" fill="#6a1828"/><path transform="translate(40 88) rotate(15) scale(1.4)" d="M0 8 L-8 0 A4.5 4.5 0 0 1 0 -6 A4.5 4.5 0 0 1 8 0z" fill="#e84462"/><path transform="translate(12 90) rotate(-5) scale(1.4)" d="M0 8 L-8 0 A4.5 4.5 0 0 1 0 -6 A4.5 4.5 0 0 1 8 0z" fill="#c82c4a"/><path transform="translate(78 90) rotate(20) scale(1.3)" d="M0 8 L-8 0 A4.5 4.5 0 0 1 0 -6 A4.5 4.5 0 0 1 8 0z" fill="#d83656"/><path transform="translate(65 40) rotate(0) scale(0.8)" d="M0 8 L-8 0 A4.5 4.5 0 0 1 0 -6 A4.5 4.5 0 0 1 8 0z" fill="#8a2838"/><path transform="translate(95 80) rotate(0) scale(1.0)" d="M0 8 L-8 0 A4.5 4.5 0 0 1 0 -6 A4.5 4.5 0 0 1 8 0z" fill="#b02840"/></svg><div class="dia"><svg style="left:5px;top:5.5px" width="12" height="11"><path d="M3 0.8h6l2.4 3.2L6 10.2 0.6 4z M0.6 4h10.8 M3 0.8l1.2 3.2L6 10.2 7.8 4 9 0.8" fill="none" stroke="#f2b233" stroke-width="1" stroke-linejoin="round"/></svg></div></div>
<div class="a th" style="left:238px;top:846px;width:98px;height:99px"><svg style="left:0;top:0" width="98" height="99" viewBox="0 0 98 99"><defs><linearGradient id="l2" x1="0" y1="0" x2="0" y2="1"><stop offset="0" stop-color="#26ccf8"/><stop offset="0.45" stop-color="#58d6f8"/><stop offset="1" stop-color="#aee8fa"/></linearGradient></defs><rect width="98" height="99" fill="url(#l2)"/></svg><div class="dia"><svg style="left:5px;top:5.5px" width="12" height="11"><path d="M3 0.8h6l2.4 3.2L6 10.2 0.6 4z M0.6 4h10.8 M3 0.8l1.2 3.2L6 10.2 7.8 4 9 0.8" fill="none" stroke="#f2b233" stroke-width="1" stroke-linejoin="round"/></svg></div></div>
<div class="a th" style="left:352px;top:843px;width:104px;height:105px"><svg style="left:0;top:0" width="104" height="105" viewBox="0 0 104 105"><defs><filter id="b8" x="-10%" y="-10%" width="120%" height="120%"><feGaussianBlur stdDeviation="1.2"/></filter></defs><g filter="url(#b8)"><rect width="104" height="105" fill="#3a3a3e"/>
<ellipse cx="35" cy="15" rx="22" ry="15" fill="#262222"/>
<ellipse cx="32" cy="40" rx="14" ry="18" fill="#5a4a42"/>
<ellipse cx="62" cy="30" rx="20" ry="26" fill="#6e5e52"/>
<ellipse cx="75" cy="12" rx="24" ry="14" fill="#5a5450"/>
<path d="M0 60 Q20 55 40 70 L45 105 H0z" fill="#4a3a30"/>
<path d="M50 60 Q80 50 104 65 V105 H50z" fill="#504036"/>
<path d="M25 40 Q35 60 28 70" stroke="#6a6a6a" stroke-width="6" fill="none"/></g></svg><div class="chev" style="background:rgba(20,20,24,.8)"></div></div>
<svg style="left:399px;top:887px" width="10" height="15"><path d="M1.5 1.5l6 6-6 6" fill="none" stroke="#fff" stroke-width="2"/></svg>
<div class="a th" style="left:121px;top:1013px;width:99px;height:30px"><svg style="left:0;top:0" width="99" height="30" viewBox="0 0 99 30"><rect width="99" height="30" fill="#2a2170"/></svg><div class="dia" style="width:28px"></div></div>
<div class="a th" style="left:238px;top:1013px;width:98px;height:30px"><svg style="left:0;top:0" width="98" height="30" viewBox="0 0 98 30"><rect width="98" height="30" fill="#2a2170"/></svg><div class="dia" style="width:28px"></div></div>
<div class="a th" style="left:352px;top:1011px;width:104px;height:30px"><svg style="left:0;top:0" width="104" height="30" viewBox="0 0 104 30"><defs><linearGradient id="t3" x1="0" y1="0" x2="1" y2="0"><stop offset="0" stop-color="#6a3088"/><stop offset="0.45" stop-color="#3a4a80"/><stop offset="0.6" stop-color="#5a5a6a"/><stop offset="1" stop-color="#2a7068"/></linearGradient></defs><rect width="104" height="30" fill="url(#t3)"/></svg></div>
<!--/PN-->
<!-- MAIN -->
<div class="a" style="left:487px;top:499px;width:19px;height:70px;border-radius:0 8px 8px 0;background:#26262f"></div>
<svg style="left:494px;top:522px" width="8" height="12"><path d="M6 1.5L2 6l4 4.5" fill="none" stroke="#8a8a94" stroke-width="1.6"/></svg>

<div class="a tb" style="left:517px;width:108px"><span style="left:43px">Layout</span></div>
<svg style="left:532px;top:75px" width="18" height="17"><rect x="1" y="1" width="15.5" height="15" rx="3" fill="none" stroke="#cfcfd8" stroke-width="1.4"/><path d="M5.5 1v15M5.5 11.5h11" stroke="#cfcfd8" stroke-width="1.4"/></svg>
<div class="a tb" style="left:635px;width:136px"><span style="left:44px">Transform</span></div>
<svg style="left:650px;top:73px" width="19" height="19"><path d="M6 3h7M6 16h7M3 6v7M16 6v7" stroke="#cfcfd8" stroke-width="1.3"/><circle cx="3" cy="3" r="1.7" fill="#cfcfd8"/><circle cx="16" cy="3" r="1.7" fill="#cfcfd8"/><circle cx="3" cy="16" r="1.7" fill="#cfcfd8"/><circle cx="16" cy="16" r="1.7" fill="#cfcfd8"/></svg>
<div class="a tb" style="left:781px;width:102px"><span style="left:42px">Filters</span></div>
<svg style="left:794px;top:74px" width="20" height="20"><path d="M2.2 15.8L11.8 6.2a1.3 1.3 0 0 1 1.9 1.9L4.1 17.7a1.3 1.3 0 0 1-1.9-1.9z" fill="none" stroke="#cfcfd8" stroke-width="1.2"/><path d="M5.5 2v3M4 3.5h3M17.8 1v3M16.3 2.5h3M15.5 13v2.6M14.2 14.3h2.6" stroke="#cfcfd8" stroke-width="1.2"/></svg>
<div class="a tb" style="left:893px;width:158px"><span style="left:42px">Adjust colors</span></div>
<svg style="left:907px;top:74px" width="20" height="20"><circle cx="10" cy="10" r="8.5" fill="none" stroke="#cfcfd8" stroke-width="1.5"/><path d="M10 1.5A8.5 8.5 0 0 1 10 18.5z" fill="#cfcfd8"/></svg>
<div class="a tb" style="left:1062px;width:92px"><span style="left:42px">Fade</span></div>
<svg style="left:1075px;top:74px" width="20" height="20"><circle cx="10" cy="10" r="8.5" fill="none" stroke="#cfcfd8" stroke-width="1.5"/><path d="M9.5 1.5v17M12.3 2v16M15 3.2v13.6" stroke="#cfcfd8" stroke-width="1.3"/></svg>
<div class="a tb" style="left:1164px;width:105px"><span style="left:43px">Speed</span></div>
<svg style="left:1178px;top:74px" width="21" height="18"><path d="M3.2 15.5A8.6 8.6 0 1 1 17.8 15.5" fill="none" stroke="#cfcfd8" stroke-width="1.4"/><path d="M10.5 10.5l4-5" stroke="#cfcfd8" stroke-width="2.2" stroke-linecap="round"/><path d="M10.5 2v2M4.5 4.5l1.3 1.3M2 10.5h2M16.5 4.5l-1.3 1.3M19 10.5h-2" stroke="#cfcfd8" stroke-width="1.2"/></svg>
<div class="a tb" style="left:1279px;width:102px"><span style="left:42px">Audio</span></div>
<svg style="left:1292px;top:74px" width="22" height="20"><path d="M1.5 7h3.5l5-4.5v15l-5-4.5H1.5z" fill="none" stroke="#cfcfd8" stroke-width="1.4" stroke-linejoin="round"/><path d="M13.5 6.5a4 4 0 0 1 0 7M16 4a7.5 7.5 0 0 1 0 12" fill="none" stroke="#cfcfd8" stroke-width="1.3"/></svg>

<div class="a" style="left:1584px;top:58px;width:162px;height:50px;border-radius:25px;background:#2a2a35"></div>
<svg style="left:1611px;top:72px" width="22" height="22"><path d="M5.5 1.5h10l4.5 6L10.5 20.5 1 7.5z M1 7.5h19 M8 1.5L6.8 7.5l3.7 13 3.7-13L13 1.5" fill="none" stroke="#f2b233" stroke-width="2" stroke-linejoin="round"/></svg>
<div class="a" style="left:1644px;top:72.5px;font-size:19.2px;font-weight:bold;color:#fff;line-height:24px">Upgrade</div>
<div class="a" style="left:1757px;top:58px;width:130px;height:50px;border-radius:25px;background:#5a4fdc"></div>
<div class="a" style="left:1777px;top:72.5px;font-size:18.8px;font-weight:bold;color:#fff;line-height:24px">Export</div>
<svg style="left:1851px;top:78px" width="15" height="9"><path d="M1.5 1.5l6 6 6-6" fill="none" stroke="#fff" stroke-width="2"/></svg>
<div class="a" style="left:1793px;top:138px;width:62px;height:35px;border:1px solid #b8b8c0;border-radius:2px;color:#fff;font-size:14px;font-weight:bold;line-height:36px;text-align:center">16:9</div>

<div class="a" style="left:857px;top:138px;width:668px;height:376px;background:#000"></div>
<div class="a" style="left:1805px;top:491px;width:50px;height:50px;border-radius:50%;background:#fff"></div>
<svg style="left:1820px;top:501px" width="22" height="34"><defs><linearGradient id="qg" x1="0" y1="0" x2="1" y2="0.6"><stop offset="0" stop-color="#5548e0"/><stop offset="1" stop-color="#4a8ee8"/></linearGradient></defs><path d="M2.2 10A7.8 7.8 0 1 1 14.5 16.5C11.5 18.5 10.3 19 10.3 22.5V24" fill="none" stroke="url(#qg)" stroke-width="5.2"/><circle cx="10.2" cy="28.6" r="3.3" fill="#a050d8"/></svg>

<svg style="left:1084px;top:534px" width="20" height="20"><path d="M1.6 1v17" stroke="#c4c4cc" stroke-width="1.6"/><path d="M17.5 2.2v14.6a1 1 0 0 1-1.5.8L5 10.3a1 1 0 0 1 0-1.6l11-7.3a1 1 0 0 1 1.5.8z" fill="#c4c4cc"/></svg>
<svg style="left:1127px;top:531px" width="24" height="26"><path d="M5.5 11.5A9.5 9.5 0 1 0 11.5 5.5" fill="none" stroke="#c4c4cc" stroke-width="1.7"/><path d="M13 1.5L8.5 5.5 13 9.5z" fill="#c4c4cc"/><text x="11.5" y="20.5" font-family="Liberation Sans" font-weight="bold" font-size="11" fill="#c4c4cc" text-anchor="middle">5</text></svg>
<svg style="left:1181px;top:531px" width="23" height="25"><path d="M2.5 3.5v17a1.6 1.6 0 0 0 2.4 1.4l15-8.5a1.6 1.6 0 0 0 0-2.8l-15-8.5A1.6 1.6 0 0 0 2.5 3.5z" fill="#c4c4cc"/></svg>
<svg style="left:1232px;top:531px" width="24" height="26"><path d="M18.5 11.5A9.5 9.5 0 1 1 12.5 5.5" fill="none" stroke="#c4c4cc" stroke-width="1.7"/><path d="M11 1.5l4.5 4-4.5 4z" fill="#c4c4cc"/><text x="12.5" y="20.5" font-family="Liberation Sans" font-weight="bold" font-size="11" fill="#c4c4cc" text-anchor="middle">5</text></svg>
<svg style="left:1278px;top:534px" width="20" height="20"><path d="M18.4 1v17" stroke="#c4c4cc" stroke-width="1.6"/><path d="M2.5 2.2v14.6a1 1 0 0 0 1.5.8L15 10.3a1 1 0 0 0 0-1.6L4 1.4a1 1 0 0 0-1.5.8z" fill="#c4c4cc"/></svg>
<svg style="left:1492px;top:535px" width="19" height="18"><path d="M1 5V1h4M14 1h4v4M18 13v4h-4M5 17H1v-4" fill="none" stroke="#c4c4cc" stroke-width="1.6"/></svg>

<!-- TIMELINE -->
<div class="a" style="left:487px;top:594px;width:1408px;height:49px;background:#18181f"></div>
<div class="a" style="left:487px;top:593px;width:1408px;height:1px;background:#2c2c36"></div>
<div class="a" style="left:487px;top:643px;width:1408px;height:1px;background:#2c2c36"></div>
<svg style="left:1794px;top:573px" width="72" height="21"><path d="M0 21Q6 21 7 14L8 8Q9 1 16 1H56Q63 1 64 8L65 14Q66 21 72 21z" fill="#25252f"/></svg>
<svg style="left:1825px;top:580px" width="11" height="7"><path d="M1 1l4.5 4.5L10 1" fill="none" stroke="#9a9aa4" stroke-width="1.5"/></svg>
<div class="a ib" style="left:584px;background:#1e1e26"></div>
<svg style="left:600px;top:608px" width="18" height="20"><path d="M8 17.5H6A5 5 0 0 1 6 7.5h9" fill="none" stroke="#8a8a94" stroke-width="1.5"/><path d="M11.5 3.5L15.2 7.5 11.5 11.5" fill="none" stroke="#8a8a94" stroke-width="1.5"/></svg>
<div class="a ib" style="left:640px"></div>
<svg style="left:654px;top:607px" width="22" height="24"><path d="M5 1l10 16M17 1L7 17" stroke="#d0d0d8" stroke-width="1.4"/><circle cx="5" cy="19.5" r="3.2" fill="none" stroke="#d0d0d8" stroke-width="1.5"/><circle cx="17" cy="19.5" r="3.2" fill="none" stroke="#d0d0d8" stroke-width="1.5"/></svg>
<div class="a ib" style="left:696px"></div>
<svg style="left:710px;top:607px" width="21" height="23"><path d="M1.5 5h18M7.5 5V2.5h6V5M3.5 5l1.5 15.5h11L17.5 5M8.5 9v8M12.5 9v8" fill="none" stroke="#d0d0d8" stroke-width="1.6" stroke-linejoin="round"/></svg>
<div class="a ib" style="left:752px"></div>
<svg style="left:767px;top:607px" width="24" height="24"><path d="M5 18.5A2.5 2.5 0 0 1 2.5 16V6A2.5 2.5 0 0 1 5 3.5" fill="none" stroke="#d0d0d8" stroke-width="1.4"/><rect x="5.5" y="1" width="10" height="17" rx="2" fill="none" stroke="#d0d0d8" stroke-width="1.4"/><circle cx="16" cy="17" r="5.5" fill="#d0d0d8"/><path d="M16 14v6M13 17h6" stroke="#2a2a34" stroke-width="1.6"/></svg>

<div class="a" style="left:1107.3px;top:609.5px;font-family:'Liberation Mono',monospace;font-size:15.6px;color:#fff;-webkit-text-stroke:0.3px #fff;line-height:20px;white-space:pre">00:09<span style="color:#77777f;-webkit-text-stroke:0">.62</span></div>
<svg style="left:1186px;top:611px" width="10" height="17"><path d="M8.5 1L2 16" stroke="#77777f" stroke-width="1.3"/></svg>
<div class="a" style="left:1199px;top:609.5px;font-family:'Liberation Mono',monospace;font-size:15.6px;color:#fff;-webkit-text-stroke:0.3px #fff;line-height:20px;white-space:pre">02:01<span style="color:#77777f;-webkit-text-stroke:0">.06</span></div>

<div class="a ib" style="left:1693px"></div>
<svg style="left:1706px;top:607px" width="22" height="22"><path d="M11 1v20M1 11h20" stroke="#d0d0d8" stroke-width="1.6"/></svg>
<div class="a ib" style="left:1749px"></div>
<svg style="left:1764px;top:617px" width="20" height="3"><path d="M0 1.5h19" stroke="#d0d0d8" stroke-width="1.6"/></svg>
<div class="a ib" style="left:1805px"></div>
<svg style="left:1819px;top:608px" width="22" height="22"><path d="M1.5 20.5L8.5 13.5M3 13.5h5.5V19M20.5 1.5L13.5 8.5M13.5 3v5.5H19" fill="none" stroke="#d0d0d8" stroke-width="1.5"/></svg>
<!--TL-->
<div class="a tk" style="left:511px;top:644px;height:38px"></div>
<div class="a tk" style="left:595px;top:644px;height:13px"></div>
<div class="a rl" style="left:518px">0</div>
<div class="a tk" style="left:679px;top:644px;height:38px"></div>
<div class="a tk" style="left:763px;top:644px;height:13px"></div>
<div class="a rl" style="left:686px">0:02</div>
<div class="a tk" style="left:847px;top:644px;height:38px"></div>
<div class="a tk" style="left:931px;top:644px;height:13px"></div>
<div class="a rl" style="left:854px">0:04</div>
<div class="a tk" style="left:1015px;top:644px;height:38px"></div>
<div class="a tk" style="left:1099px;top:644px;height:13px"></div>
<div class="a rl" style="left:1022px">0:06</div>
<div class="a tk" style="left:1183px;top:644px;height:38px"></div>
<div class="a tk" style="left:1267px;top:644px;height:13px"></div>
<div class="a rl" style="left:1190px">0:08</div>
<div class="a tk" style="left:1351px;top:644px;height:38px"></div>
<div class="a tk" style="left:1435px;top:644px;height:13px"></div>
<div class="a rl" style="left:1358px">0:10</div>
<div class="a tk" style="left:1519px;top:644px;height:38px"></div>
<div class="a tk" style="left:1603px;top:644px;height:13px"></div>
<div class="a rl" style="left:1526px">0:12</div>
<div class="a tk" style="left:1687px;top:644px;height:38px"></div>
<div class="a tk" style="left:1771px;top:644px;height:13px"></div>
<div class="a rl" style="left:1694px">0:14</div>
<div class="a tk" style="left:1855px;top:644px;height:38px"></div>
<div class="a rl" style="left:1862px">0:16</div>
<div class="a" style="left:512px;top:785px;width:1362px;height:75px;border-radius:4px;background:#1e1e28"></div>
<div class="a" style="left:512px;top:870px;width:408px;height:38px;border-radius:4px;background:#2f80f0;overflow:hidden">
<svg style="left:0;top:0" width="408" height="38"><defs><linearGradient id="wm" x1="0" y1="0" x2="1" y2="0"><stop offset="0" stop-color="#fff" stop-opacity="0.35"/><stop offset="1" stop-color="#fff" stop-opacity="1"/></linearGradient><mask id="wmk1" maskUnits="userSpaceOnUse" x="0" y="0" width="408" height="38"><rect width="160" height="38" fill="url(#wm)"/><rect x="160" width="248" height="38" fill="#fff"/></mask><clipPath id="wc1"><path d="M0 9.0 L1 8.5 L2 8.1 L3 7.6 L4 7.2 L5 6.7 L6 6.3 L7 6.0 L8 6.0 L9 6.0 L10 6.0 L11 6.0 L12 6.0 L13 6.0 L14 6.0 L15 6.0 L16 6.0 L17 6.0 L18 6.0 L19 6.0 L20 6.0 L21 6.0 L22 6.0 L23 6.0 L24 6.0 L25 6.0 L26 6.0 L27 6.0 L28 6.0 L29 6.0 L30 6.0 L31 6.0 L32 6.0 L33 6.0 L34 6.0 L35 6.0 L36 6.0 L37 6.0 L38 6.0 L39 6.3 L40 6.7 L41 7.2 L42 7.6 L43 8.1 L44 8.5 L45 8.5 L46 8.2 L47 7.8 L48 7.5 L49 7.1 L50 6.8 L51 6.5 L52 6.2 L53 6.0 L54 6.0 L55 6.0 L56 6.0 L57 6.0 L58 6.0 L59 6.0 L60 6.0 L61 6.0 L62 6.0 L63 6.0 L64 6.0 L65 6.0 L66 6.0 L67 6.0 L68 6.0 L69 6.0 L70 6.0 L71 6.0 L72 6.0 L73 6.0 L74 6.0 L75 6.0 L76 6.0 L77 6.0 L78 6.0 L79 6.0 L80 6.0 L81 6.0 L82 6.0 L83 6.0 L84 6.0 L85 6.0 L86 6.0 L87 6.0 L88 6.2 L89 6.5 L90 6.8 L91 7.1 L92 7.5 L93 7.8 L94 8.2 L95 8.0 L96 7.5 L97 7.1 L98 6.6 L99 6.2 L100 6.0 L101 6.0 L102 6.0 L103 6.0 L104 6.0 L105 6.0 L106 6.0 L107 6.0 L108 6.0 L109 6.0 L110 6.0 L111 6.0 L112 6.0 L113 6.0 L114 6.0 L115 6.0 L116 6.0 L117 6.0 L118 6.0 L119 6.0 L120 6.2 L121 6.6 L122 7.1 L123 7.5 L124 8.5 L125 8.1 L126 7.8 L127 7.4 L128 7.1 L129 6.7 L130 6.4 L131 6.1 L132 6.0 L133 6.0 L134 6.0 L135 6.0 L136 6.0 L137 6.0 L138 6.0 L139 6.0 L140 6.0 L141 6.0 L142 6.0 L143 6.0 L144 6.0 L145 6.0 L146 6.0 L147 6.0 L148 6.0 L149 6.0 L150 6.0 L151 6.0 L152 6.0 L153 6.0 L154 6.0 L155 6.0 L156 6.0 L157 6.0 L158 6.0 L159 6.0 L160 6.0 L161 6.0 L162 6.0 L163 6.0 L164 6.0 L165 6.1 L166 6.4 L167 6.7 L168 7.1 L169 7.4 L170 7.8 L171 8.1 L172 7.5 L173 7.3 L174 7.1 L175 7.0 L176 6.8 L177 6.6 L178 6.4 L179 6.3 L180 6.1 L181 6.0 L182 6.0 L183 6.0 L184 6.0 L185 6.0 L186 6.0 L187 6.0 L188 6.0 L189 6.0 L190 6.0 L191 6.0 L192 6.0 L193 6.0 L194 6.0 L195 6.0 L196 6.0 L197 6.0 L198 6.0 L199 6.0 L200 6.0 L201 6.0 L202 6.0 L203 6.0 L204 6.0 L205 6.0 L206 6.0 L207 6.0 L208 6.0 L209 6.0 L210 6.0 L211 6.0 L212 6.0 L213 6.0 L214 6.0 L215 6.0 L216 6.0 L217 6.0 L218 6.0 L219 6.0 L220 6.0 L221 6.1 L222 6.3 L223 6.4 L224 6.6 L225 6.8 L226 7.0 L227 7.1 L228 7.3 L229 8.0 L230 7.5 L231 7.0 L232 6.5 L233 6.0 L234 6.0 L235 6.0 L236 6.0 L237 6.0 L238 6.0 L239 6.0 L240 6.0 L241 6.0 L242 6.0 L243 6.0 L244 6.0 L245 6.0 L246 6.0 L247 6.0 L248 6.0 L249 6.0 L250 6.0 L251 6.0 L252 6.0 L253 6.5 L254 7.0 L255 7.5 L256 8.0 L257 7.7 L258 7.5 L259 7.2 L260 6.9 L261 6.7 L262 6.4 L263 6.2 L264 6.0 L265 6.0 L266 6.0 L267 6.0 L268 6.0 L269 6.0 L270 6.0 L271 6.0 L272 6.0 L273 6.0 L274 6.0 L275 6.0 L276 6.0 L277 6.0 L278 6.0 L279 6.0 L280 6.0 L281 6.0 L282 6.0 L283 6.0 L284 6.0 L285 6.0 L286 6.0 L287 6.0 L288 6.0 L289 6.0 L290 6.0 L291 6.0 L292 6.0 L293 6.0 L294 6.0 L295 6.0 L296 6.0 L297 6.0 L298 6.0 L299 6.0 L300 6.0 L301 6.2 L302 6.4 L303 6.7 L304 6.9 L305 7.2 L306 7.5 L307 7.7 L308 7.5 L309 7.1 L310 6.8 L311 6.4 L312 6.1 L313 6.0 L314 6.0 L315 6.0 L316 6.0 L317 6.0 L318 6.0 L319 6.0 L320 6.0 L321 6.0 L322 6.0 L323 6.0 L324 6.0 L325 6.0 L326 6.0 L327 6.0 L328 6.0 L329 6.0 L330 6.0 L331 6.0 L332 6.0 L333 6.1 L334 6.4 L335 6.8 L336 7.1 L337 8.0 L338 7.5 L339 7.1 L340 6.6 L341 6.2 L342 6.0 L343 6.0 L344 6.0 L345 6.0 L346 6.0 L347 6.0 L348 6.0 L349 6.0 L350 6.0 L351 6.0 L352 6.0 L353 6.0 L354 6.0 L355 6.0 L356 6.0 L357 6.0 L358 6.0 L359 6.0 L360 6.0 L361 6.0 L362 6.0 L363 6.2 L364 6.6 L365 7.1 L366 7.5 L367 8.0 L368 7.5 L369 7.0 L370 6.5 L371 6.1 L372 6.0 L373 6.0 L374 6.0 L375 6.0 L376 6.0 L377 6.0 L378 6.0 L379 6.0 L380 6.0 L381 6.0 L382 6.0 L383 6.0 L384 6.0 L385 6.0 L386 6.0 L387 6.0 L388 6.0 L389 6.0 L390 6.0 L391 6.1 L392 6.5 L393 7.0 L394 7.5 L395 8.5 L396 8.1 L397 7.6 L398 7.2 L399 6.8 L400 6.3 L401 6.0 L402 6.0 L403 6.0 L404 6.0 L405 6.0 L406 6.0 L406 31.0 L405 31.0 L404 31.0 L403 31.0 L402 31.0 L401 31.0 L400 30.6 L399 30.3 L398 29.9 L397 29.5 L396 29.1 L395 28.7 L394 29.6 L393 30.0 L392 30.5 L391 30.9 L390 31.0 L389 31.0 L388 31.0 L387 31.0 L386 31.0 L385 31.0 L384 31.0 L383 31.0 L382 31.0 L381 31.0 L380 31.0 L379 31.0 L378 31.0 L377 31.0 L376 31.0 L375 31.0 L374 31.0 L373 31.0 L372 31.0 L371 30.9 L370 30.5 L369 30.0 L368 29.6 L367 29.1 L366 29.5 L365 30.0 L364 30.4 L363 30.8 L362 31.0 L361 31.0 L360 31.0 L359 31.0 L358 31.0 L357 31.0 L356 31.0 L355 31.0 L354 31.0 L353 31.0 L352 31.0 L351 31.0 L350 31.0 L349 31.0 L348 31.0 L347 31.0 L346 31.0 L345 31.0 L344 31.0 L343 31.0 L342 31.0 L341 30.8 L340 30.4 L339 30.0 L338 29.5 L337 29.1 L336 29.9 L335 30.2 L334 30.5 L333 30.9 L332 31.0 L331 31.0 L330 31.0 L329 31.0 L328 31.0 L327 31.0 L326 31.0 L325 31.0 L324 31.0 L323 31.0 L322 31.0 L321 31.0 L320 31.0 L319 31.0 L318 31.0 L317 31.0 L316 31.0 L315 31.0 L314 31.0 L313 31.0 L312 30.9 L311 30.5 L310 30.2 L309 29.9 L308 29.6 L307 29.4 L306 29.6 L305 29.8 L304 30.1 L303 30.3 L302 30.6 L301 30.8 L300 31.0 L299 31.0 L298 31.0 L297 31.0 L296 31.0 L295 31.0 L294 31.0 L293 31.0 L292 31.0 L291 31.0 L290 31.0 L289 31.0 L288 31.0 L287 31.0 L286 31.0 L285 31.0 L284 31.0 L283 31.0 L282 31.0 L281 31.0 L280 31.0 L279 31.0 L278 31.0 L277 31.0 L276 31.0 L275 31.0 L274 31.0 L273 31.0 L272 31.0 L271 31.0 L270 31.0 L269 31.0 L268 31.0 L267 31.0 L266 31.0 L265 31.0 L264 31.0 L263 30.8 L262 30.6 L261 30.3 L260 30.1 L259 29.8 L258 29.6 L257 29.4 L256 29.1 L255 29.6 L254 30.1 L253 30.5 L252 30.9 L251 31.0 L250 31.0 L249 31.0 L248 31.0 L247 31.0 L246 31.0 L245 31.0 L244 31.0 L243 31.0 L242 31.0 L241 31.0 L240 31.0 L239 31.0 L238 31.0 L237 31.0 L236 31.0 L235 31.0 L234 31.0 L233 30.9 L232 30.5 L231 30.1 L230 29.6 L229 29.1 L228 29.7 L227 29.9 L226 30.1 L225 30.2 L224 30.4 L223 30.6 L222 30.7 L221 30.9 L220 31.0 L219 31.0 L218 31.0 L217 31.0 L216 31.0 L215 31.0 L214 31.0 L213 31.0 L212 31.0 L211 31.0 L210 31.0 L209 31.0 L208 31.0 L207 31.0 L206 31.0 L205 31.0 L204 31.0 L203 31.0 L202 31.0 L201 31.0 L200 31.0 L199 31.0 L198 31.0 L197 31.0 L196 31.0 L195 31.0 L194 31.0 L193 31.0 L192 31.0 L191 31.0 L190 31.0 L189 31.0 L188 31.0 L187 31.0 L186 31.0 L185 31.0 L184 31.0 L183 31.0 L182 31.0 L181 31.0 L180 30.9 L179 30.7 L178 30.6 L177 30.4 L176 30.2 L175 30.1 L174 29.9 L173 29.7 L172 29.6 L171 29.0 L170 29.3 L169 29.6 L168 30.0 L167 30.3 L166 30.6 L165 30.9 L164 31.0 L163 31.0 L162 31.0 L161 31.0 L160 31.0 L159 31.0 L158 31.0 L157 31.0 L156 31.0 L155 31.0 L154 31.0 L153 31.0 L152 31.0 L151 31.0 L150 31.0 L149 31.0 L148 31.0 L147 31.0 L146 31.0 L145 31.0 L144 31.0 L143 31.0 L142 31.0 L141 31.0 L140 31.0 L139 31.0 L138 31.0 L137 31.0 L136 31.0 L135 31.0 L134 31.0 L133 31.0 L132 31.0 L131 30.9 L130 30.6 L129 30.3 L128 30.0 L127 29.6 L126 29.3 L125 29.0 L124 28.7 L123 29.6 L122 30.0 L121 30.4 L120 30.8 L119 31.0 L118 31.0 L117 31.0 L116 31.0 L115 31.0 L114 31.0 L113 31.0 L112 31.0 L111 31.0 L110 31.0 L109 31.0 L108 31.0 L107 31.0 L106 31.0 L105 31.0 L104 31.0 L103 31.0 L102 31.0 L101 31.0 L100 31.0 L99 30.8 L98 30.4 L97 30.0 L96 29.6 L95 29.1 L94 29.0 L93 29.3 L92 29.6 L91 29.9 L90 30.2 L89 30.5 L88 30.8 L87 31.0 L86 31.0 L85 31.0 L84 31.0 L83 31.0 L82 31.0 L81 31.0 L80 31.0 L79 31.0 L78 31.0 L77 31.0 L76 31.0 L75 31.0 L74 31.0 L73 31.0 L72 31.0 L71 31.0 L70 31.0 L69 31.0 L68 31.0 L67 31.0 L66 31.0 L65 31.0 L64 31.0 L63 31.0 L62 31.0 L61 31.0 L60 31.0 L59 31.0 L58 31.0 L57 31.0 L56 31.0 L55 31.0 L54 31.0 L53 31.0 L52 30.8 L51 30.5 L50 30.2 L49 29.9 L48 29.6 L47 29.3 L46 29.0 L45 28.7 L44 28.6 L43 29.0 L42 29.5 L41 29.9 L40 30.3 L39 30.7 L38 31.0 L37 31.0 L36 31.0 L35 31.0 L34 31.0 L33 31.0 L32 31.0 L31 31.0 L30 31.0 L29 31.0 L28 31.0 L27 31.0 L26 31.0 L25 31.0 L24 31.0 L23 31.0 L22 31.0 L21 31.0 L20 31.0 L19 31.0 L18 31.0 L17 31.0 L16 31.0 L15 31.0 L14 31.0 L13 31.0 L12 31.0 L11 31.0 L10 31.0 L9 31.0 L8 31.0 L7 31.0 L6 30.7 L5 30.3 L4 29.9 L3 29.5 L2 29.0 L1 28.6 L0 28.2Z"/></clipPath></defs><g mask="url(#wmk1)"><path d="M0 9.0 L1 8.5 L2 8.1 L3 7.6 L4 7.2 L5 6.7 L6 6.3 L7 6.0 L8 6.0 L9 6.0 L10 6.0 L11 6.0 L12 6.0 L13 6.0 L14 6.0 L15 6.0 L16 6.0 L17 6.0 L18 6.0 L19 6.0 L20 6.0 L21 6.0 L22 6.0 L23 6.0 L24 6.0 L25 6.0 L26 6.0 L27 6.0 L28 6.0 L29 6.0 L30 6.0 L31 6.0 L32 6.0 L33 6.0 L34 6.0 L35 6.0 L36 6.0 L37 6.0 L38 6.0 L39 6.3 L40 6.7 L41 7.2 L42 7.6 L43 8.1 L44 8.5 L45 8.5 L46 8.2 L47 7.8 L48 7.5 L49 7.1 L50 6.8 L51 6.5 L52 6.2 L53 6.0 L54 6.0 L55 6.0 L56 6.0 L57 6.0 L58 6.0 L59 6.0 L60 6.0 L61 6.0 L62 6.0 L63 6.0 L64 6.0 L65 6.0 L66 6.0 L67 6.0 L68 6.0 L69 6.0 L70 6.0 L71 6.0 L72 6.0 L73 6.0 L74 6.0 L75 6.0 L76 6.0 L77 6.0 L78 6.0 L79 6.0 L80 6.0 L81 6.0 L82 6.0 L83 6.0 L84 6.0 L85 6.0 L86 6.0 L87 6.0 L88 6.2 L89 6.5 L90 6.8 L91 7.1 L92 7.5 L93 7.8 L94 8.2 L95 8.0 L96 7.5 L97 7.1 L98 6.6 L99 6.2 L100 6.0 L101 6.0 L102 6.0 L103 6.0 L104 6.0 L105 6.0 L106 6.0 L107 6.0 L108 6.0 L109 6.0 L110 6.0 L111 6.0 L112 6.0 L113 6.0 L114 6.0 L115 6.0 L116 6.0 L117 6.0 L118 6.0 L119 6.0 L120 6.2 L121 6.6 L122 7.1 L123 7.5 L124 8.5 L125 8.1 L126 7.8 L127 7.4 L128 7.1 L129 6.7 L130 6.4 L131 6.1 L132 6.0 L133 6.0 L134 6.0 L135 6.0 L136 6.0 L137 6.0 L138 6.0 L139 6.0 L140 6.0 L141 6.0 L142 6.0 L143 6.0 L144 6.0 L145 6.0 L146 6.0 L147 6.0 L148 6.0 L149 6.0 L150 6.0 L151 6.0 L152 6.0 L153 6.0 L154 6.0 L155 6.0 L156 6.0 L157 6.0 L158 6.0 L159 6.0 L160 6.0 L161 6.0 L162 6.0 L163 6.0 L164 6.0 L165 6.1 L166 6.4 L167 6.7 L168 7.1 L169 7.4 L170 7.8 L171 8.1 L172 7.5 L173 7.3 L174 7.1 L175 7.0 L176 6.8 L177 6.6 L178 6.4 L179 6.3 L180 6.1 L181 6.0 L182 6.0 L183 6.0 L184 6.0 L185 6.0 L186 6.0 L187 6.0 L188 6.0 L189 6.0 L190 6.0 L191 6.0 L192 6.0 L193 6.0 L194 6.0 L195 6.0 L196 6.0 L197 6.0 L198 6.0 L199 6.0 L200 6.0 L201 6.0 L202 6.0 L203 6.0 L204 6.0 L205 6.0 L206 6.0 L207 6.0 L208 6.0 L209 6.0 L210 6.0 L211 6.0 L212 6.0 L213 6.0 L214 6.0 L215 6.0 L216 6.0 L217 6.0 L218 6.0 L219 6.0 L220 6.0 L221 6.1 L222 6.3 L223 6.4 L224 6.6 L225 6.8 L226 7.0 L227 7.1 L228 7.3 L229 8.0 L230 7.5 L231 7.0 L232 6.5 L233 6.0 L234 6.0 L235 6.0 L236 6.0 L237 6.0 L238 6.0 L239 6.0 L240 6.0 L241 6.0 L242 6.0 L243 6.0 L244 6.0 L245 6.0 L246 6.0 L247 6.0 L248 6.0 L249 6.0 L250 6.0 L251 6.0 L252 6.0 L253 6.5 L254 7.0 L255 7.5 L256 8.0 L257 7.7 L258 7.5 L259 7.2 L260 6.9 L261 6.7 L262 6.4 L263 6.2 L264 6.0 L265 6.0 L266 6.0 L267 6.0 L268 6.0 L269 6.0 L270 6.0 L271 6.0 L272 6.0 L273 6.0 L274 6.0 L275 6.0 L276 6.0 L277 6.0 L278 6.0 L279 6.0 L280 6.0 L281 6.0 L282 6.0 L283 6.0 L284 6.0 L285 6.0 L286 6.0 L287 6.0 L288 6.0 L289 6.0 L290 6.0 L291 6.0 L292 6.0 L293 6.0 L294 6.0 L295 6.0 L296 6.0 L297 6.0 L298 6.0 L299 6.0 L300 6.0 L301 6.2 L302 6.4 L303 6.7 L304 6.9 L305 7.2 L306 7.5 L307 7.7 L308 7.5 L309 7.1 L310 6.8 L311 6.4 L312 6.1 L313 6.0 L314 6.0 L315 6.0 L316 6.0 L317 6.0 L318 6.0 L319 6.0 L320 6.0 L321 6.0 L322 6.0 L323 6.0 L324 6.0 L325 6.0 L326 6.0 L327 6.0 L328 6.0 L329 6.0 L330 6.0 L331 6.0 L332 6.0 L333 6.1 L334 6.4 L335 6.8 L336 7.1 L337 8.0 L338 7.5 L339 7.1 L340 6.6 L341 6.2 L342 6.0 L343 6.0 L344 6.0 L345 6.0 L346 6.0 L347 6.0 L348 6.0 L349 6.0 L350 6.0 L351 6.0 L352 6.0 L353 6.0 L354 6.0 L355 6.0 L356 6.0 L357 6.0 L358 6.0 L359 6.0 L360 6.0 L361 6.0 L362 6.0 L363 6.2 L364 6.6 L365 7.1 L366 7.5 L367 8.0 L368 7.5 L369 7.0 L370 6.5 L371 6.1 L372 6.0 L373 6.0 L374 6.0 L375 6.0 L376 6.0 L377 6.0 L378 6.0 L379 6.0 L380 6.0 L381 6.0 L382 6.0 L383 6.0 L384 6.0 L385 6.0 L386 6.0 L387 6.0 L388 6.0 L389 6.0 L390 6.0 L391 6.1 L392 6.5 L393 7.0 L394 7.5 L395 8.5 L396 8.1 L397 7.6 L398 7.2 L399 6.8 L400 6.3 L401 6.0 L402 6.0 L403 6.0 L404 6.0 L405 6.0 L406 6.0 L406 31.0 L405 31.0 L404 31.0 L403 31.0 L402 31.0 L401 31.0 L400 30.6 L399 30.3 L398 29.9 L397 29.5 L396 29.1 L395 28.7 L394 29.6 L393 30.0 L392 30.5 L391 30.9 L390 31.0 L389 31.0 L388 31.0 L387 31.0 L386 31.0 L385 31.0 L384 31.0 L383 31.0 L382 31.0 L381 31.0 L380 31.0 L379 31.0 L378 31.0 L377 31.0 L376 31.0 L375 31.0 L374 31.0 L373 31.0 L372 31.0 L371 30.9 L370 30.5 L369 30.0 L368 29.6 L367 29.1 L366 29.5 L365 30.0 L364 30.4 L363 30.8 L362 31.0 L361 31.0 L360 31.0 L359 31.0 L358 31.0 L357 31.0 L356 31.0 L355 31.0 L354 31.0 L353 31.0 L352 31.0 L351 31.0 L350 31.0 L349 31.0 L348 31.0 L347 31.0 L346 31.0 L345 31.0 L344 31.0 L343 31.0 L342 31.0 L341 30.8 L340 30.4 L339 30.0 L338 29.5 L337 29.1 L336 29.9 L335 30.2 L334 30.5 L333 30.9 L332 31.0 L331 31.0 L330 31.0 L329 31.0 L328 31.0 L327 31.0 L326 31.0 L325 31.0 L324 31.0 L323 31.0 L322 31.0 L321 31.0 L320 31.0 L319 31.0 L318 31.0 L317 31.0 L316 31.0 L315 31.0 L314 31.0 L313 31.0 L312 30.9 L311 30.5 L310 30.2 L309 29.9 L308 29.6 L307 29.4 L306 29.6 L305 29.8 L304 30.1 L303 30.3 L302 30.6 L301 30.8 L300 31.0 L299 31.0 L298 31.0 L297 31.0 L296 31.0 L295 31.0 L294 31.0 L293 31.0 L292 31.0 L291 31.0 L290 31.0 L289 31.0 L288 31.0 L287 31.0 L286 31.0 L285 31.0 L284 31.0 L283 31.0 L282 31.0 L281 31.0 L280 31.0 L279 31.0 L278 31.0 L277 31.0 L276 31.0 L275 31.0 L274 31.0 L273 31.0 L272 31.0 L271 31.0 L270 31.0 L269 31.0 L268 31.0 L267 31.0 L266 31.0 L265 31.0 L264 31.0 L263 30.8 L262 30.6 L261 30.3 L260 30.1 L259 29.8 L258 29.6 L257 29.4 L256 29.1 L255 29.6 L254 30.1 L253 30.5 L252 30.9 L251 31.0 L250 31.0 L249 31.0 L248 31.0 L247 31.0 L246 31.0 L245 31.0 L244 31.0 L243 31.0 L242 31.0 L241 31.0 L240 31.0 L239 31.0 L238 31.0 L237 31.0 L236 31.0 L235 31.0 L234 31.0 L233 30.9 L232 30.5 L231 30.1 L230 29.6 L229 29.1 L228 29.7 L227 29.9 L226 30.1 L225 30.2 L224 30.4 L223 30.6 L222 30.7 L221 30.9 L220 31.0 L219 31.0 L218 31.0 L217 31.0 L216 31.0 L215 31.0 L214 31.0 L213 31.0 L212 31.0 L211 31.0 L210 31.0 L209 31.0 L208 31.0 L207 31.0 L206 31.0 L205 31.0 L204 31.0 L203 31.0 L202 31.0 L201 31.0 L200 31.0 L199 31.0 L198 31.0 L197 31.0 L196 31.0 L195 31.0 L194 31.0 L193 31.0 L192 31.0 L191 31.0 L190 31.0 L189 31.0 L188 31.0 L187 31.0 L186 31.0 L185 31.0 L184 31.0 L183 31.0 L182 31.0 L181 31.0 L180 30.9 L179 30.7 L178 30.6 L177 30.4 L176 30.2 L175 30.1 L174 29.9 L173 29.7 L172 29.6 L171 29.0 L170 29.3 L169 29.6 L168 30.0 L167 30.3 L166 30.6 L165 30.9 L164 31.0 L163 31.0 L162 31.0 L161 31.0 L160 31.0 L159 31.0 L158 31.0 L157 31.0 L156 31.0 L155 31.0 L154 31.0 L153 31.0 L152 31.0 L151 31.0 L150 31.0 L149 31.0 L148 31.0 L147 31.0 L146 31.0 L145 31.0 L144 31.0 L143 31.0 L142 31.0 L141 31.0 L140 31.0 L139 31.0 L138 31.0 L137 31.0 L136 31.0 L135 31.0 L134 31.0 L133 31.0 L132 31.0 L131 30.9 L130 30.6 L129 30.3 L128 30.0 L127 29.6 L126 29.3 L125 29.0 L124 28.7 L123 29.6 L122 30.0 L121 30.4 L120 30.8 L119 31.0 L118 31.0 L117 31.0 L116 31.0 L115 31.0 L114 31.0 L113 31.0 L112 31.0 L111 31.0 L110 31.0 L109 31.0 L108 31.0 L107 31.0 L106 31.0 L105 31.0 L104 31.0 L103 31.0 L102 31.0 L101 31.0 L100 31.0 L99 30.8 L98 30.4 L97 30.0 L96 29.6 L95 29.1 L94 29.0 L93 29.3 L92 29.6 L91 29.9 L90 30.2 L89 30.5 L88 30.8 L87 31.0 L86 31.0 L85 31.0 L84 31.0 L83 31.0 L82 31.0 L81 31.0 L80 31.0 L79 31.0 L78 31.0 L77 31.0 L76 31.0 L75 31.0 L74 31.0 L73 31.0 L72 31.0 L71 31.0 L70 31.0 L69 31.0 L68 31.0 L67 31.0 L66 31.0 L65 31.0 L64 31.0 L63 31.0 L62 31.0 L61 31.0 L60 31.0 L59 31.0 L58 31.0 L57 31.0 L56 31.0 L55 31.0 L54 31.0 L53 31.0 L52 30.8 L51 30.5 L50 30.2 L49 29.9 L48 29.6 L47 29.3 L46 29.0 L45 28.7 L44 28.6 L43 29.0 L42 29.5 L41 29.9 L40 30.3 L39 30.7 L38 31.0 L37 31.0 L36 31.0 L35 31.0 L34 31.0 L33 31.0 L32 31.0 L31 31.0 L30 31.0 L29 31.0 L28 31.0 L27 31.0 L26 31.0 L25 31.0 L24 31.0 L23 31.0 L22 31.0 L21 31.0 L20 31.0 L19 31.0 L18 31.0 L17 31.0 L16 31.0 L15 31.0 L14 31.0 L13 31.0 L12 31.0 L11 31.0 L10 31.0 L9 31.0 L8 31.0 L7 31.0 L6 30.7 L5 30.3 L4 29.9 L3 29.5 L2 29.0 L1 28.6 L0 28.2Z" fill="#72a8f6"/><path clip-path="url(#wc1)" d="M0.5 0v38 M3.5 0v38 M6.5 0v38 M9.5 0v38 M12.5 0v38 M15.5 0v38 M18.5 0v38 M21.5 0v38 M24.5 0v38 M27.5 0v38 M30.5 0v38 M33.5 0v38 M36.5 0v38 M39.5 0v38 M42.5 0v38 M45.5 0v38 M48.5 0v38 M51.5 0v38 M54.5 0v38 M57.5 0v38 M60.5 0v38 M63.5 0v38 M66.5 0v38 M69.5 0v38 M72.5 0v38 M75.5 0v38 M78.5 0v38 M81.5 0v38 M84.5 0v38 M87.5 0v38 M90.5 0v38 M93.5 0v38 M96.5 0v38 M99.5 0v38 M102.5 0v38 M105.5 0v38 M108.5 0v38 M111.5 0v38 M114.5 0v38 M117.5 0v38 M120.5 0v38 M123.5 0v38 M126.5 0v38 M129.5 0v38 M132.5 0v38 M135.5 0v38 M138.5 0v38 M141.5 0v38 M144.5 0v38 M147.5 0v38 M150.5 0v38 M153.5 0v38 M156.5 0v38 M159.5 0v38 M162.5 0v38 M165.5 0v38 M168.5 0v38 M171.5 0v38 M174.5 0v38 M177.5 0v38 M180.5 0v38 M183.5 0v38 M186.5 0v38 M189.5 0v38 M192.5 0v38 M195.5 0v38 M198.5 0v38 M201.5 0v38 M204.5 0v38 M207.5 0v38 M210.5 0v38 M213.5 0v38 M216.5 0v38 M219.5 0v38 M222.5 0v38 M225.5 0v38 M228.5 0v38 M231.5 0v38 M234.5 0v38 M237.5 0v38 M240.5 0v38 M243.5 0v38 M246.5 0v38 M249.5 0v38 M252.5 0v38 M255.5 0v38 M258.5 0v38 M261.5 0v38 M264.5 0v38 M267.5 0v38 M270.5 0v38 M273.5 0v38 M276.5 0v38 M279.5 0v38 M282.5 0v38 M285.5 0v38 M288.5 0v38 M291.5 0v38 M294.5 0v38 M297.5 0v38 M300.5 0v38 M303.5 0v38 M306.5 0v38 M309.5 0v38 M312.5 0v38 M315.5 0v38 M318.5 0v38 M321.5 0v38 M324.5 0v38 M327.5 0v38 M330.5 0v38 M333.5 0v38 M336.5 0v38 M339.5 0v38 M342.5 0v38 M345.5 0v38 M348.5 0v38 M351.5 0v38 M354.5 0v38 M357.5 0v38 M360.5 0v38 M363.5 0v38 M366.5 0v38 M369.5 0v38 M372.5 0v38 M375.5 0v38 M378.5 0v38 M381.5 0v38 M384.5 0v38 M387.5 0v38 M390.5 0v38 M393.5 0v38 M396.5 0v38 M399.5 0v38 M402.5 0v38 M405.5 0v38" stroke="#5a96f2" stroke-width="0.8"/></g></svg>
</div>
<div class="a" style="left:926px;top:870px;width:948px;height:38px;border-radius:4px;background:#2f80f0;overflow:hidden">
<svg style="left:0;top:0" width="948" height="38"><defs><mask id="wmk2" maskUnits="userSpaceOnUse" x="0" y="0" width="948" height="38"><rect width="160" height="38" fill="url(#wm)"/><rect x="160" width="788" height="38" fill="#fff"/></mask><clipPath id="wc2"><path d="M0 8.5 L1 8.2 L2 7.8 L3 7.5 L4 7.1 L5 6.8 L6 6.5 L7 6.2 L8 6.0 L9 6.0 L10 6.0 L11 6.0 L12 6.0 L13 6.0 L14 6.0 L15 6.0 L16 6.0 L17 6.0 L18 6.0 L19 6.0 L20 6.0 L21 6.0 L22 6.0 L23 6.0 L24 6.0 L25 6.0 L26 6.0 L27 6.0 L28 6.0 L29 6.0 L30 6.0 L31 6.0 L32 6.0 L33 6.0 L34 6.0 L35 6.0 L36 6.0 L37 6.0 L38 6.0 L39 6.0 L40 6.0 L41 6.0 L42 6.0 L43 6.2 L44 6.5 L45 6.8 L46 7.1 L47 7.5 L48 7.8 L49 8.2 L50 8.5 L51 8.1 L52 7.6 L53 7.2 L54 6.8 L55 6.3 L56 6.0 L57 6.0 L58 6.0 L59 6.0 L60 6.0 L61 6.0 L62 6.0 L63 6.0 L64 6.0 L65 6.0 L66 6.0 L67 6.0 L68 6.0 L69 6.0 L70 6.0 L71 6.0 L72 6.0 L73 6.0 L74 6.0 L75 6.0 L76 6.0 L77 6.0 L78 6.0 L79 6.0 L80 6.0 L81 6.0 L82 6.0 L83 6.0 L84 6.3 L85 6.8 L86 7.2 L87 7.6 L88 8.1 L89 9.0 L90 8.7 L91 8.3 L92 8.0 L93 7.6 L94 7.3 L95 7.0 L96 6.6 L97 6.3 L98 6.0 L99 6.0 L100 6.0 L101 6.0 L102 6.0 L103 6.0 L104 6.0 L105 6.0 L106 6.0 L107 6.0 L108 6.0 L109 6.0 L110 6.0 L111 6.0 L112 6.0 L113 6.0 L114 6.0 L115 6.0 L116 6.0 L117 6.0 L118 6.0 L119 6.0 L120 6.0 L121 6.0 L122 6.0 L123 6.0 L124 6.0 L125 6.0 L126 6.0 L127 6.0 L128 6.0 L129 6.0 L130 6.0 L131 6.0 L132 6.0 L133 6.0 L134 6.0 L135 6.0 L136 6.0 L137 6.0 L138 6.0 L139 6.0 L140 6.0 L141 6.3 L142 6.6 L143 7.0 L144 7.3 L145 7.6 L146 8.0 L147 8.3 L148 8.7 L149 8.0 L150 7.7 L151 7.4 L152 7.0 L153 6.7 L154 6.4 L155 6.1 L156 6.0 L157 6.0 L158 6.0 L159 6.0 L160 6.0 L161 6.0 L162 6.0 L163 6.0 L164 6.0 L165 6.0 L166 6.0 L167 6.0 L168 6.0 L169 6.0 L170 6.0 L171 6.0 L172 6.0 L173 6.0 L174 6.0 L175 6.0 L176 6.0 L177 6.0 L178 6.0 L179 6.0 L180 6.0 L181 6.0 L182 6.0 L183 6.0 L184 6.0 L185 6.0 L186 6.1 L187 6.4 L188 6.7 L189 7.0 L190 7.4 L191 7.7 L192 8.0 L193 7.6 L194 7.2 L195 6.8 L196 6.4 L197 6.0 L198 6.0 L199 6.0 L200 6.0 L201 6.0 L202 6.0 L203 6.0 L204 6.0 L205 6.0 L206 6.0 L207 6.0 L208 6.0 L209 6.0 L210 6.0 L211 6.0 L212 6.0 L213 6.0 L214 6.0 L215 6.0 L216 6.0 L217 6.0 L218 6.0 L219 6.0 L220 6.0 L221 6.0 L222 6.4 L223 6.8 L224 7.2 L225 7.6 L226 9.0 L227 8.5 L228 8.1 L229 7.6 L230 7.1 L231 6.7 L232 6.3 L233 6.0 L234 6.0 L235 6.0 L236 6.0 L237 6.0 L238 6.0 L239 6.0 L240 6.0 L241 6.0 L242 6.0 L243 6.0 L244 6.0 L245 6.0 L246 6.0 L247 6.0 L248 6.0 L249 6.0 L250 6.0 L251 6.0 L252 6.0 L253 6.0 L254 6.0 L255 6.0 L256 6.0 L257 6.0 L258 6.0 L259 6.0 L260 6.0 L261 6.0 L262 6.0 L263 6.0 L264 6.3 L265 6.7 L266 7.1 L267 7.6 L268 8.1 L269 8.5 L270 7.5 L271 7.2 L272 6.8 L273 6.5 L274 6.2 L275 6.0 L276 6.0 L277 6.0 L278 6.0 L279 6.0 L280 6.0 L281 6.0 L282 6.0 L283 6.0 L284 6.0 L285 6.0 L286 6.0 L287 6.0 L288 6.0 L289 6.0 L290 6.0 L291 6.0 L292 6.0 L293 6.0 L294 6.0 L295 6.0 L296 6.0 L297 6.2 L298 6.5 L299 6.8 L300 7.2 L301 8.0 L302 7.7 L303 7.4 L304 7.1 L305 6.9 L306 6.6 L307 6.3 L308 6.1 L309 6.0 L310 6.0 L311 6.0 L312 6.0 L313 6.0 L314 6.0 L315 6.0 L316 6.0 L317 6.0 L318 6.0 L319 6.0 L320 6.0 L321 6.0 L322 6.0 L323 6.0 L324 6.0 L325 6.0 L326 6.0 L327 6.0 L328 6.0 L329 6.0 L330 6.0 L331 6.0 L332 6.0 L333 6.0 L334 6.0 L335 6.0 L336 6.0 L337 6.0 L338 6.0 L339 6.0 L340 6.0 L341 6.0 L342 6.1 L343 6.3 L344 6.6 L345 6.9 L346 7.1 L347 7.4 L348 7.7 L349 8.0 L350 7.8 L351 7.5 L352 7.3 L353 7.1 L354 6.9 L355 6.6 L356 6.4 L357 6.2 L358 6.0 L359 6.0 L360 6.0 L361 6.0 L362 6.0 L363 6.0 L364 6.0 L365 6.0 L366 6.0 L367 6.0 L368 6.0 L369 6.0 L370 6.0 L371 6.0 L372 6.0 L373 6.0 L374 6.0 L375 6.0 L376 6.0 L377 6.0 L378 6.0 L379 6.0 L380 6.0 L381 6.0 L382 6.0 L383 6.0 L384 6.0 L385 6.0 L386 6.0 L387 6.0 L388 6.0 L389 6.0 L390 6.0 L391 6.0 L392 6.0 L393 6.0 L394 6.0 L395 6.0 L396 6.0 L397 6.0 L398 6.0 L399 6.0 L400 6.0 L401 6.2 L402 6.4 L403 6.6 L404 6.9 L405 7.1 L406 7.3 L407 7.5 L408 7.8 L409 7.5 L410 7.1 L411 6.8 L412 6.4 L413 6.1 L414 6.0 L415 6.0 L416 6.0 L417 6.0 L418 6.0 L419 6.0 L420 6.0 L421 6.0 L422 6.0 L423 6.0 L424 6.0 L425 6.0 L426 6.0 L427 6.0 L428 6.0 L429 6.0 L430 6.0 L431 6.0 L432 6.0 L433 6.1 L434 6.4 L435 6.8 L436 7.1 L437 8.0 L438 7.8 L439 7.5 L440 7.3 L441 7.0 L442 6.8 L443 6.5 L444 6.3 L445 6.1 L446 6.0 L447 6.0 L448 6.0 L449 6.0 L450 6.0 L451 6.0 L452 6.0 L453 6.0 L454 6.0 L455 6.0 L456 6.0 L457 6.0 L458 6.0 L459 6.0 L460 6.0 L461 6.0 L462 6.0 L463 6.0 L464 6.0 L465 6.0 L466 6.0 L467 6.0 L468 6.0 L469 6.0 L470 6.0 L471 6.0 L472 6.0 L473 6.0 L474 6.0 L475 6.0 L476 6.0 L477 6.0 L478 6.0 L479 6.0 L480 6.0 L481 6.0 L482 6.0 L483 6.0 L484 6.0 L485 6.1 L486 6.3 L487 6.5 L488 6.8 L489 7.0 L490 7.3 L491 7.5 L492 7.8 L493 13.0 L494 11.9 L495 10.9 L496 9.8 L497 8.8 L498 7.7 L499 6.7 L500 6.0 L501 6.0 L502 6.0 L503 6.0 L504 6.0 L505 6.0 L506 6.0 L507 6.0 L508 6.0 L509 6.0 L510 6.0 L511 6.0 L512 6.0 L513 6.0 L514 6.0 L515 6.0 L516 6.0 L517 6.0 L518 6.0 L519 6.0 L520 6.0 L521 6.0 L522 6.0 L523 6.0 L524 6.0 L525 6.0 L526 6.0 L527 6.0 L528 6.0 L529 6.0 L530 6.0 L531 6.0 L532 6.7 L533 7.7 L534 8.8 L535 9.8 L536 10.9 L537 11.9 L538 8.5 L539 8.2 L540 7.9 L541 7.5 L542 7.2 L543 6.9 L544 6.6 L545 6.3 L546 6.0 L547 6.0 L548 6.0 L549 6.0 L550 6.0 L551 6.0 L552 6.0 L553 6.0 L554 6.0 L555 6.0 L556 6.0 L557 6.0 L558 6.0 L559 6.0 L560 6.0 L561 6.0 L562 6.0 L563 6.0 L564 6.0 L565 6.0 L566 6.0 L567 6.0 L568 6.0 L569 6.0 L570 6.0 L571 6.0 L572 6.0 L573 6.0 L574 6.0 L575 6.0 L576 6.0 L577 6.0 L578 6.0 L579 6.0 L580 6.0 L581 6.0 L582 6.0 L583 6.0 L584 6.0 L585 6.3 L586 6.6 L587 6.9 L588 7.2 L589 7.5 L590 7.9 L591 8.2 L592 7.5 L593 7.3 L594 7.0 L595 6.8 L596 6.6 L597 6.3 L598 6.1 L599 6.0 L600 6.0 L601 6.0 L602 6.0 L603 6.0 L604 6.0 L605 6.0 L606 6.0 L607 6.0 L608 6.0 L609 6.0 L610 6.0 L611 6.0 L612 6.0 L613 6.0 L614 6.0 L615 6.0 L616 6.0 L617 6.0 L618 6.0 L619 6.0 L620 6.0 L621 6.0 L622 6.0 L623 6.0 L624 6.0 L625 6.0 L626 6.0 L627 6.0 L628 6.0 L629 6.0 L630 6.1 L631 6.3 L632 6.6 L633 6.8 L634 7.0 L635 7.3 L636 7.5 L637 7.2 L638 6.9 L639 6.6 L640 6.4 L641 6.1 L642 6.0 L643 6.0 L644 6.0 L645 6.0 L646 6.0 L647 6.0 L648 6.0 L649 6.0 L650 6.0 L651 6.0 L652 6.0 L653 6.0 L654 6.0 L655 6.0 L656 6.0 L657 6.0 L658 6.0 L659 6.0 L660 6.0 L661 6.0 L662 6.0 L663 6.0 L664 6.0 L665 6.0 L666 6.0 L667 6.1 L668 6.4 L669 6.6 L670 6.9 L671 7.2 L672 9.5 L673 8.7 L674 7.9 L675 7.1 L676 6.4 L677 6.0 L678 6.0 L679 6.0 L680 6.0 L681 6.0 L682 6.0 L683 6.0 L684 6.0 L685 6.0 L686 6.0 L687 6.0 L688 6.0 L689 6.0 L690 6.0 L691 6.0 L692 6.0 L693 6.0 L694 6.0 L695 6.0 L696 6.0 L697 6.0 L698 6.4 L699 7.1 L700 7.9 L701 8.7 L702 13.0 L703 12.2 L704 11.3 L705 10.5 L706 9.7 L707 8.9 L708 8.1 L709 7.3 L710 6.5 L711 6.0 L712 6.0 L713 6.0 L714 6.0 L715 6.0 L716 6.0 L717 6.0 L718 6.0 L719 6.0 L720 6.0 L721 6.0 L722 6.0 L723 6.0 L724 6.0 L725 6.0 L726 6.0 L727 6.0 L728 6.0 L729 6.0 L730 6.0 L731 6.0 L732 6.0 L733 6.0 L734 6.0 L735 6.0 L736 6.0 L737 6.0 L738 6.0 L739 6.0 L740 6.0 L741 6.0 L742 6.0 L743 6.0 L744 6.0 L745 6.0 L746 6.0 L747 6.0 L748 6.0 L749 6.0 L750 6.0 L751 6.0 L752 6.5 L753 7.3 L754 8.1 L755 8.9 L756 9.7 L757 10.5 L758 11.3 L759 12.2 L760 13.0 L761 11.9 L762 10.9 L763 9.9 L764 8.8 L765 7.8 L766 6.9 L767 6.0 L768 6.0 L769 6.0 L770 6.0 L771 6.0 L772 6.0 L773 6.0 L774 6.0 L775 6.0 L776 6.0 L777 6.0 L778 6.0 L779 6.0 L780 6.0 L781 6.0 L782 6.0 L783 6.0 L784 6.0 L785 6.0 L786 6.0 L787 6.0 L788 6.0 L789 6.0 L790 6.0 L791 6.0 L792 6.0 L793 6.0 L794 6.0 L795 6.0 L796 6.0 L797 6.0 L798 6.0 L799 6.0 L800 6.9 L801 7.8 L802 8.8 L803 9.9 L804 10.9 L805 11.9 L806 8.0 L807 7.7 L808 7.4 L809 7.0 L810 6.7 L811 6.4 L812 6.1 L813 6.0 L814 6.0 L815 6.0 L816 6.0 L817 6.0 L818 6.0 L819 6.0 L820 6.0 L821 6.0 L822 6.0 L823 6.0 L824 6.0 L825 6.0 L826 6.0 L827 6.0 L828 6.0 L829 6.0 L830 6.0 L831 6.0 L832 6.0 L833 6.0 L834 6.0 L835 6.0 L836 6.0 L837 6.0 L838 6.0 L839 6.0 L840 6.0 L841 6.0 L842 6.0 L843 6.1 L844 6.4 L845 6.7 L846 7.0 L847 7.4 L848 7.7 L849 8.0 L850 7.6 L851 7.1 L852 6.7 L853 6.3 L854 6.0 L855 6.0 L856 6.0 L857 6.0 L858 6.0 L859 6.0 L860 6.0 L861 6.0 L862 6.0 L863 6.0 L864 6.0 L865 6.0 L866 6.0 L867 6.0 L868 6.0 L869 6.0 L870 6.0 L871 6.0 L872 6.0 L873 6.0 L874 6.0 L875 6.0 L876 6.0 L877 6.3 L878 6.7 L879 7.1 L880 7.6 L881 8.5 L882 8.0 L883 7.5 L884 7.0 L885 6.6 L886 6.1 L887 6.0 L888 6.0 L889 6.0 L890 6.0 L891 6.0 L892 6.0 L893 6.0 L894 6.0 L895 6.0 L896 6.0 L897 6.0 L898 6.0 L899 6.0 L900 6.0 L901 6.0 L902 6.0 L903 6.0 L904 6.0 L905 6.0 L906 6.0 L907 6.0 L908 6.0 L909 6.0 L910 6.0 L911 6.1 L912 6.6 L913 7.0 L914 7.5 L915 8.0 L916 13.0 L917 11.6 L918 10.2 L919 8.8 L920 7.4 L921 6.1 L922 6.0 L923 6.0 L924 6.0 L925 6.0 L926 6.0 L927 6.0 L928 6.0 L929 6.0 L930 6.0 L931 6.0 L932 6.0 L933 6.0 L934 6.0 L935 6.0 L936 6.0 L937 6.0 L938 6.0 L939 6.0 L940 6.0 L941 6.0 L942 6.0 L943 6.0 L944 6.0 L945 6.1 L946 7.4 L946 29.6 L945 30.8 L944 31.0 L943 31.0 L942 31.0 L941 31.0 L940 31.0 L939 31.0 L938 31.0 L937 31.0 L936 31.0 L935 31.0 L934 31.0 L933 31.0 L932 31.0 L931 31.0 L930 31.0 L929 31.0 L928 31.0 L927 31.0 L926 31.0 L925 31.0 L924 31.0 L923 31.0 L922 31.0 L921 30.8 L920 29.6 L919 28.4 L918 27.1 L917 25.8 L916 24.5 L915 29.1 L914 29.6 L913 30.0 L912 30.4 L911 30.9 L910 31.0 L909 31.0 L908 31.0 L907 31.0 L906 31.0 L905 31.0 L904 31.0 L903 31.0 L902 31.0 L901 31.0 L900 31.0 L899 31.0 L898 31.0 L897 31.0 L896 31.0 L895 31.0 L894 31.0 L893 31.0 L892 31.0 L891 31.0 L890 31.0 L889 31.0 L888 31.0 L887 31.0 L886 30.9 L885 30.4 L884 30.0 L883 29.6 L882 29.1 L881 28.7 L880 29.5 L879 29.9 L878 30.3 L877 30.7 L876 31.0 L875 31.0 L874 31.0 L873 31.0 L872 31.0 L871 31.0 L870 31.0 L869 31.0 L868 31.0 L867 31.0 L866 31.0 L865 31.0 L864 31.0 L863 31.0 L862 31.0 L861 31.0 L860 31.0 L859 31.0 L858 31.0 L857 31.0 L856 31.0 L855 31.0 L854 31.0 L853 30.7 L852 30.3 L851 29.9 L850 29.5 L849 29.1 L848 29.4 L847 29.7 L846 30.0 L845 30.3 L844 30.6 L843 30.8 L842 31.0 L841 31.0 L840 31.0 L839 31.0 L838 31.0 L837 31.0 L836 31.0 L835 31.0 L834 31.0 L833 31.0 L832 31.0 L831 31.0 L830 31.0 L829 31.0 L828 31.0 L827 31.0 L826 31.0 L825 31.0 L824 31.0 L823 31.0 L822 31.0 L821 31.0 L820 31.0 L819 31.0 L818 31.0 L817 31.0 L816 31.0 L815 31.0 L814 31.0 L813 31.0 L812 30.8 L811 30.6 L810 30.3 L809 30.0 L808 29.7 L807 29.4 L806 29.1 L805 25.5 L804 26.4 L803 27.4 L802 28.3 L801 29.3 L800 30.2 L799 31.0 L798 31.0 L797 31.0 L796 31.0 L795 31.0 L794 31.0 L793 31.0 L792 31.0 L791 31.0 L790 31.0 L789 31.0 L788 31.0 L787 31.0 L786 31.0 L785 31.0 L784 31.0 L783 31.0 L782 31.0 L781 31.0 L780 31.0 L779 31.0 L778 31.0 L777 31.0 L776 31.0 L775 31.0 L774 31.0 L773 31.0 L772 31.0 L771 31.0 L770 31.0 L769 31.0 L768 31.0 L767 31.0 L766 30.2 L765 29.3 L764 28.3 L763 27.4 L762 26.4 L761 25.5 L760 24.5 L759 25.3 L758 26.1 L757 26.8 L756 27.6 L755 28.3 L754 29.0 L753 29.8 L752 30.5 L751 31.0 L750 31.0 L749 31.0 L748 31.0 L747 31.0 L746 31.0 L745 31.0 L744 31.0 L743 31.0 L742 31.0 L741 31.0 L740 31.0 L739 31.0 L738 31.0 L737 31.0 L736 31.0 L735 31.0 L734 31.0 L733 31.0 L732 31.0 L731 31.0 L730 31.0 L729 31.0 L728 31.0 L727 31.0 L726 31.0 L725 31.0 L724 31.0 L723 31.0 L722 31.0 L721 31.0 L720 31.0 L719 31.0 L718 31.0 L717 31.0 L716 31.0 L715 31.0 L714 31.0 L713 31.0 L712 31.0 L711 31.0 L710 30.5 L709 29.8 L708 29.0 L707 28.3 L706 27.6 L705 26.8 L704 26.1 L703 25.3 L702 24.5 L701 28.5 L700 29.2 L699 29.9 L698 30.6 L697 31.0 L696 31.0 L695 31.0 L694 31.0 L693 31.0 L692 31.0 L691 31.0 L690 31.0 L689 31.0 L688 31.0 L687 31.0 L686 31.0 L685 31.0 L684 31.0 L683 31.0 L682 31.0 L681 31.0 L680 31.0 L679 31.0 L678 31.0 L677 31.0 L676 30.6 L675 29.9 L674 29.2 L673 28.5 L672 27.7 L671 29.8 L670 30.1 L669 30.4 L668 30.6 L667 30.9 L666 31.0 L665 31.0 L664 31.0 L663 31.0 L662 31.0 L661 31.0 L660 31.0 L659 31.0 L658 31.0 L657 31.0 L656 31.0 L655 31.0 L654 31.0 L653 31.0 L652 31.0 L651 31.0 L650 31.0 L649 31.0 L648 31.0 L647 31.0 L646 31.0 L645 31.0 L644 31.0 L643 31.0 L642 31.0 L641 30.9 L640 30.6 L639 30.4 L638 30.1 L637 29.8 L636 29.6 L635 29.8 L634 30.0 L633 30.2 L632 30.4 L631 30.6 L630 30.8 L629 31.0 L628 31.0 L627 31.0 L626 31.0 L625 31.0 L624 31.0 L623 31.0 L622 31.0 L621 31.0 L620 31.0 L619 31.0 L618 31.0 L617 31.0 L616 31.0 L615 31.0 L614 31.0 L613 31.0 L612 31.0 L611 31.0 L610 31.0 L609 31.0 L608 31.0 L607 31.0 L606 31.0 L605 31.0 L604 31.0 L603 31.0 L602 31.0 L601 31.0 L600 31.0 L599 31.0 L598 30.8 L597 30.6 L596 30.4 L595 30.2 L594 30.0 L593 29.8 L592 29.6 L591 29.0 L590 29.2 L589 29.5 L588 29.8 L587 30.1 L586 30.4 L585 30.7 L584 30.9 L583 31.0 L582 31.0 L581 31.0 L580 31.0 L579 31.0 L578 31.0 L577 31.0 L576 31.0 L575 31.0 L574 31.0 L573 31.0 L572 31.0 L571 31.0 L570 31.0 L569 31.0 L568 31.0 L567 31.0 L566 31.0 L565 31.0 L564 31.0 L563 31.0 L562 31.0 L561 31.0 L560 31.0 L559 31.0 L558 31.0 L557 31.0 L556 31.0 L555 31.0 L554 31.0 L553 31.0 L552 31.0 L551 31.0 L550 31.0 L549 31.0 L548 31.0 L547 31.0 L546 30.9 L545 30.7 L544 30.4 L543 30.1 L542 29.8 L541 29.5 L540 29.2 L539 29.0 L538 28.7 L537 25.5 L536 26.5 L535 27.5 L534 28.4 L533 29.4 L532 30.3 L531 31.0 L530 31.0 L529 31.0 L528 31.0 L527 31.0 L526 31.0 L525 31.0 L524 31.0 L523 31.0 L522 31.0 L521 31.0 L520 31.0 L519 31.0 L518 31.0 L517 31.0 L516 31.0 L515 31.0 L514 31.0 L513 31.0 L512 31.0 L511 31.0 L510 31.0 L509 31.0 L508 31.0 L507 31.0 L506 31.0 L505 31.0 L504 31.0 L503 31.0 L502 31.0 L501 31.0 L500 31.0 L499 30.3 L498 29.4 L497 28.4 L496 27.5 L495 26.5 L494 25.5 L493 24.5 L492 29.3 L491 29.6 L490 29.8 L489 30.0 L488 30.2 L487 30.5 L486 30.7 L485 30.9 L484 31.0 L483 31.0 L482 31.0 L481 31.0 L480 31.0 L479 31.0 L478 31.0 L477 31.0 L476 31.0 L475 31.0 L474 31.0 L473 31.0 L472 31.0 L471 31.0 L470 31.0 L469 31.0 L468 31.0 L467 31.0 L466 31.0 L465 31.0 L464 31.0 L463 31.0 L462 31.0 L461 31.0 L460 31.0 L459 31.0 L458 31.0 L457 31.0 L456 31.0 L455 31.0 L454 31.0 L453 31.0 L452 31.0 L451 31.0 L450 31.0 L449 31.0 L448 31.0 L447 31.0 L446 31.0 L445 30.9 L444 30.7 L443 30.5 L442 30.2 L441 30.0 L440 29.8 L439 29.6 L438 29.3 L437 29.1 L436 29.9 L435 30.3 L434 30.6 L433 30.9 L432 31.0 L431 31.0 L430 31.0 L429 31.0 L428 31.0 L427 31.0 L426 31.0 L425 31.0 L424 31.0 L423 31.0 L422 31.0 L421 31.0 L420 31.0 L419 31.0 L418 31.0 L417 31.0 L416 31.0 L415 31.0 L414 31.0 L413 30.9 L412 30.6 L411 30.3 L410 29.9 L409 29.6 L408 29.3 L407 29.5 L406 29.8 L405 30.0 L404 30.2 L403 30.4 L402 30.6 L401 30.8 L400 31.0 L399 31.0 L398 31.0 L397 31.0 L396 31.0 L395 31.0 L394 31.0 L393 31.0 L392 31.0 L391 31.0 L390 31.0 L389 31.0 L388 31.0 L387 31.0 L386 31.0 L385 31.0 L384 31.0 L383 31.0 L382 31.0 L381 31.0 L380 31.0 L379 31.0 L378 31.0 L377 31.0 L376 31.0 L375 31.0 L374 31.0 L373 31.0 L372 31.0 L371 31.0 L370 31.0 L369 31.0 L368 31.0 L367 31.0 L366 31.0 L365 31.0 L364 31.0 L363 31.0 L362 31.0 L361 31.0 L360 31.0 L359 31.0 L358 31.0 L357 30.8 L356 30.6 L355 30.4 L354 30.2 L353 30.0 L352 29.8 L351 29.5 L350 29.3 L349 29.1 L348 29.4 L347 29.6 L346 29.9 L345 30.2 L344 30.4 L343 30.7 L342 30.9 L341 31.0 L340 31.0 L339 31.0 L338 31.0 L337 31.0 L336 31.0 L335 31.0 L334 31.0 L333 31.0 L332 31.0 L331 31.0 L330 31.0 L329 31.0 L328 31.0 L327 31.0 L326 31.0 L325 31.0 L324 31.0 L323 31.0 L322 31.0 L321 31.0 L320 31.0 L319 31.0 L318 31.0 L317 31.0 L316 31.0 L315 31.0 L314 31.0 L313 31.0 L312 31.0 L311 31.0 L310 31.0 L309 31.0 L308 30.9 L307 30.7 L306 30.4 L305 30.2 L304 29.9 L303 29.6 L302 29.4 L301 29.1 L300 29.9 L299 30.2 L298 30.5 L297 30.8 L296 31.0 L295 31.0 L294 31.0 L293 31.0 L292 31.0 L291 31.0 L290 31.0 L289 31.0 L288 31.0 L287 31.0 L286 31.0 L285 31.0 L284 31.0 L283 31.0 L282 31.0 L281 31.0 L280 31.0 L279 31.0 L278 31.0 L277 31.0 L276 31.0 L275 31.0 L274 30.8 L273 30.5 L272 30.2 L271 29.9 L270 29.6 L269 28.6 L268 29.1 L267 29.5 L266 29.9 L265 30.3 L264 30.7 L263 31.0 L262 31.0 L261 31.0 L260 31.0 L259 31.0 L258 31.0 L257 31.0 L256 31.0 L255 31.0 L254 31.0 L253 31.0 L252 31.0 L251 31.0 L250 31.0 L249 31.0 L248 31.0 L247 31.0 L246 31.0 L245 31.0 L244 31.0 L243 31.0 L242 31.0 L241 31.0 L240 31.0 L239 31.0 L238 31.0 L237 31.0 L236 31.0 L235 31.0 L234 31.0 L233 31.0 L232 30.7 L231 30.3 L230 29.9 L229 29.5 L228 29.1 L227 28.6 L226 28.2 L225 29.5 L224 29.9 L223 30.2 L222 30.6 L221 30.9 L220 31.0 L219 31.0 L218 31.0 L217 31.0 L216 31.0 L215 31.0 L214 31.0 L213 31.0 L212 31.0 L211 31.0 L210 31.0 L209 31.0 L208 31.0 L207 31.0 L206 31.0 L205 31.0 L204 31.0 L203 31.0 L202 31.0 L201 31.0 L200 31.0 L199 31.0 L198 31.0 L197 30.9 L196 30.6 L195 30.2 L194 29.9 L193 29.5 L192 29.1 L191 29.4 L190 29.7 L189 30.0 L188 30.3 L187 30.6 L186 30.8 L185 31.0 L184 31.0 L183 31.0 L182 31.0 L181 31.0 L180 31.0 L179 31.0 L178 31.0 L177 31.0 L176 31.0 L175 31.0 L174 31.0 L173 31.0 L172 31.0 L171 31.0 L170 31.0 L169 31.0 L168 31.0 L167 31.0 L166 31.0 L165 31.0 L164 31.0 L163 31.0 L162 31.0 L161 31.0 L160 31.0 L159 31.0 L158 31.0 L157 31.0 L156 31.0 L155 30.8 L154 30.6 L153 30.3 L152 30.0 L151 29.7 L150 29.4 L149 29.1 L148 28.5 L147 28.8 L146 29.1 L145 29.5 L144 29.8 L143 30.1 L142 30.4 L141 30.7 L140 31.0 L139 31.0 L138 31.0 L137 31.0 L136 31.0 L135 31.0 L134 31.0 L133 31.0 L132 31.0 L131 31.0 L130 31.0 L129 31.0 L128 31.0 L127 31.0 L126 31.0 L125 31.0 L124 31.0 L123 31.0 L122 31.0 L121 31.0 L120 31.0 L119 31.0 L118 31.0 L117 31.0 L116 31.0 L115 31.0 L114 31.0 L113 31.0 L112 31.0 L111 31.0 L110 31.0 L109 31.0 L108 31.0 L107 31.0 L106 31.0 L105 31.0 L104 31.0 L103 31.0 L102 31.0 L101 31.0 L100 31.0 L99 31.0 L98 31.0 L97 30.7 L96 30.4 L95 30.1 L94 29.8 L93 29.5 L92 29.1 L91 28.8 L90 28.5 L89 28.2 L88 29.1 L87 29.5 L86 29.9 L85 30.3 L84 30.6 L83 31.0 L82 31.0 L81 31.0 L80 31.0 L79 31.0 L78 31.0 L77 31.0 L76 31.0 L75 31.0 L74 31.0 L73 31.0 L72 31.0 L71 31.0 L70 31.0 L69 31.0 L68 31.0 L67 31.0 L66 31.0 L65 31.0 L64 31.0 L63 31.0 L62 31.0 L61 31.0 L60 31.0 L59 31.0 L58 31.0 L57 31.0 L56 31.0 L55 30.6 L54 30.3 L53 29.9 L52 29.5 L51 29.1 L50 28.7 L49 29.0 L48 29.3 L47 29.6 L46 29.9 L45 30.2 L44 30.5 L43 30.8 L42 31.0 L41 31.0 L40 31.0 L39 31.0 L38 31.0 L37 31.0 L36 31.0 L35 31.0 L34 31.0 L33 31.0 L32 31.0 L31 31.0 L30 31.0 L29 31.0 L28 31.0 L27 31.0 L26 31.0 L25 31.0 L24 31.0 L23 31.0 L22 31.0 L21 31.0 L20 31.0 L19 31.0 L18 31.0 L17 31.0 L16 31.0 L15 31.0 L14 31.0 L13 31.0 L12 31.0 L11 31.0 L10 31.0 L9 31.0 L8 31.0 L7 30.8 L6 30.5 L5 30.2 L4 29.9 L3 29.6 L2 29.3 L1 29.0 L0 28.7Z"/></clipPath></defs><g mask="url(#wmk2)"><path d="M0 8.5 L1 8.2 L2 7.8 L3 7.5 L4 7.1 L5 6.8 L6 6.5 L7 6.2 L8 6.0 L9 6.0 L10 6.0 L11 6.0 L12 6.0 L13 6.0 L14 6.0 L15 6.0 L16 6.0 L17 6.0 L18 6.0 L19 6.0 L20 6.0 L21 6.0 L22 6.0 L23 6.0 L24 6.0 L25 6.0 L26 6.0 L27 6.0 L28 6.0 L29 6.0 L30 6.0 L31 6.0 L32 6.0 L33 6.0 L34 6.0 L35 6.0 L36 6.0 L37 6.0 L38 6.0 L39 6.0 L40 6.0 L41 6.0 L42 6.0 L43 6.2 L44 6.5 L45 6.8 L46 7.1 L47 7.5 L48 7.8 L49 8.2 L50 8.5 L51 8.1 L52 7.6 L53 7.2 L54 6.8 L55 6.3 L56 6.0 L57 6.0 L58 6.0 L59 6.0 L60 6.0 L61 6.0 L62 6.0 L63 6.0 L64 6.0 L65 6.0 L66 6.0 L67 6.0 L68 6.0 L69 6.0 L70 6.0 L71 6.0 L72 6.0 L73 6.0 L74 6.0 L75 6.0 L76 6.0 L77 6.0 L78 6.0 L79 6.0 L80 6.0 L81 6.0 L82 6.0 L83 6.0 L84 6.3 L85 6.8 L86 7.2 L87 7.6 L88 8.1 L89 9.0 L90 8.7 L91 8.3 L92 8.0 L93 7.6 L94 7.3 L95 7.0 L96 6.6 L97 6.3 L98 6.0 L99 6.0 L100 6.0 L101 6.0 L102 6.0 L103 6.0 L104 6.0 L105 6.0 L106 6.0 L107 6.0 L108 6.0 L109 6.0 L110 6.0 L111 6.0 L112 6.0 L113 6.0 L114 6.0 L115 6.0 L116 6.0 L117 6.0 L118 6.0 L119 6.0 L120 6.0 L121 6.0 L122 6.0 L123 6.0 L124 6.0 L125 6.0 L126 6.0 L127 6.0 L128 6.0 L129 6.0 L130 6.0 L131 6.0 L132 6.0 L133 6.0 L134 6.0 L135 6.0 L136 6.0 L137 6.0 L138 6.0 L139 6.0 L140 6.0 L141 6.3 L142 6.6 L143 7.0 L144 7.3 L145 7.6 L146 8.0 L147 8.3 L148 8.7 L149 8.0 L150 7.7 L151 7.4 L152 7.0 L153 6.7 L154 6.4 L155 6.1 L156 6.0 L157 6.0 L158 6.0 L159 6.0 L160 6.0 L161 6.0 L162 6.0 L163 6.0 L164 6.0 L165 6.0 L166 6.0 L167 6.0 L168 6.0 L169 6.0 L170 6.0 L171 6.0 L172 6.0 L173 6.0 L174 6.0 L175 6.0 L176 6.0 L177 6.0 L178 6.0 L179 6.0 L180 6.0 L181 6.0 L182 6.0 L183 6.0 L184 6.0 L185 6.0 L186 6.1 L187 6.4 L188 6.7 L189 7.0 L190 7.4 L191 7.7 L192 8.0 L193 7.6 L194 7.2 L195 6.8 L196 6.4 L197 6.0 L198 6.0 L199 6.0 L200 6.0 L201 6.0 L202 6.0 L203 6.0 L204 6.0 L205 6.0 L206 6.0 L207 6.0 L208 6.0 L209 6.0 L210 6.0 L211 6.0 L212 6.0 L213 6.0 L214 6.0 L215 6.0 L216 6.0 L217 6.0 L218 6.0 L219 6.0 L220 6.0 L221 6.0 L222 6.4 L223 6.8 L224 7.2 L225 7.6 L226 9.0 L227 8.5 L228 8.1 L229 7.6 L230 7.1 L231 6.7 L232 6.3 L233 6.0 L234 6.0 L235 6.0 L236 6.0 L237 6.0 L238 6.0 L239 6.0 L240 6.0 L241 6.0 L242 6.0 L243 6.0 L244 6.0 L245 6.0 L246 6.0 L247 6.0 L248 6.0 L249 6.0 L250 6.0 L251 6.0 L252 6.0 L253 6.0 L254 6.0 L255 6.0 L256 6.0 L257 6.0 L258 6.0 L259 6.0 L260 6.0 L261 6.0 L262 6.0 L263 6.0 L264 6.3 L265 6.7 L266 7.1 L267 7.6 L268 8.1 L269 8.5 L270 7.5 L271 7.2 L272 6.8 L273 6.5 L274 6.2 L275 6.0 L276 6.0 L277 6.0 L278 6.0 L279 6.0 L280 6.0 L281 6.0 L282 6.0 L283 6.0 L284 6.0 L285 6.0 L286 6.0 L287 6.0 L288 6.0 L289 6.0 L290 6.0 L291 6.0 L292 6.0 L293 6.0 L294 6.0 L295 6.0 L296 6.0 L297 6.2 L298 6.5 L299 6.8 L300 7.2 L301 8.0 L302 7.7 L303 7.4 L304 7.1 L305 6.9 L306 6.6 L307 6.3 L308 6.1 L309 6.0 L310 6.0 L311 6.0 L312 6.0 L313 6.0 L314 6.0 L315 6.0 L316 6.0 L317 6.0 L318 6.0 L319 6.0 L320 6.0 L321 6.0 L322 6.0 L323 6.0 L324 6.0 L325 6.0 L326 6.0 L327 6.0 L328 6.0 L329 6.0 L330 6.0 L331 6.0 L332 6.0 L333 6.0 L334 6.0 L335 6.0 L336 6.0 L337 6.0 L338 6.0 L339 6.0 L340 6.0 L341 6.0 L342 6.1 L343 6.3 L344 6.6 L345 6.9 L346 7.1 L347 7.4 L348 7.7 L349 8.0 L350 7.8 L351 7.5 L352 7.3 L353 7.1 L354 6.9 L355 6.6 L356 6.4 L357 6.2 L358 6.0 L359 6.0 L360 6.0 L361 6.0 L362 6.0 L363 6.0 L364 6.0 L365 6.0 L366 6.0 L367 6.0 L368 6.0 L369 6.0 L370 6.0 L371 6.0 L372 6.0 L373 6.0 L374 6.0 L375 6.0 L376 6.0 L377 6.0 L378 6.0 L379 6.0 L380 6.0 L381 6.0 L382 6.0 L383 6.0 L384 6.0 L385 6.0 L386 6.0 L387 6.0 L388 6.0 L389 6.0 L390 6.0 L391 6.0 L392 6.0 L393 6.0 L394 6.0 L395 6.0 L396 6.0 L397 6.0 L398 6.0 L399 6.0 L400 6.0 L401 6.2 L402 6.4 L403 6.6 L404 6.9 L405 7.1 L406 7.3 L407 7.5 L408 7.8 L409 7.5 L410 7.1 L411 6.8 L412 6.4 L413 6.1 L414 6.0 L415 6.0 L416 6.0 L417 6.0 L418 6.0 L419 6.0 L420 6.0 L421 6.0 L422 6.0 L423 6.0 L424 6.0 L425 6.0 L426 6.0 L427 6.0 L428 6.0 L429 6.0 L430 6.0 L431 6.0 L432 6.0 L433 6.1 L434 6.4 L435 6.8 L436 7.1 L437 8.0 L438 7.8 L439 7.5 L440 7.3 L441 7.0 L442 6.8 L443 6.5 L444 6.3 L445 6.1 L446 6.0 L447 6.0 L448 6.0 L449 6.0 L450 6.0 L451 6.0 L452 6.0 L453 6.0 L454 6.0 L455 6.0 L456 6.0 L457 6.0 L458 6.0 L459 6.0 L460 6.0 L461 6.0 L462 6.0 L463 6.0 L464 6.0 L465 6.0 L466 6.0 L467 6.0 L468 6.0 L469 6.0 L470 6.0 L471 6.0 L472 6.0 L473 6.0 L474 6.0 L475 6.0 L476 6.0 L477 6.0 L478 6.0 L479 6.0 L480 6.0 L481 6.0 L482 6.0 L483 6.0 L484 6.0 L485 6.1 L486 6.3 L487 6.5 L488 6.8 L489 7.0 L490 7.3 L491 7.5 L492 7.8 L493 13.0 L494 11.9 L495 10.9 L496 9.8 L497 8.8 L498 7.7 L499 6.7 L500 6.0 L501 6.0 L502 6.0 L503 6.0 L504 6.0 L505 6.0 L506 6.0 L507 6.0 L508 6.0 L509 6.0 L510 6.0 L511 6.0 L512 6.0 L513 6.0 L514 6.0 L515 6.0 L516 6.0 L517 6.0 L518 6.0 L519 6.0 L520 6.0 L521 6.0 L522 6.0 L523 6.0 L524 6.0 L525 6.0 L526 6.0 L527 6.0 L528 6.0 L529 6.0 L530 6.0 L531 6.0 L532 6.7 L533 7.7 L534 8.8 L535 9.8 L536 10.9 L537 11.9 L538 8.5 L539 8.2 L540 7.9 L541 7.5 L542 7.2 L543 6.9 L544 6.6 L545 6.3 L546 6.0 L547 6.0 L548 6.0 L549 6.0 L550 6.0 L551 6.0 L552 6.0 L553 6.0 L554 6.0 L555 6.0 L556 6.0 L557 6.0 L558 6.0 L559 6.0 L560 6.0 L561 6.0 L562 6.0 L563 6.0 L564 6.0 L565 6.0 L566 6.0 L567 6.0 L568 6.0 L569 6.0 L570 6.0 L571 6.0 L572 6.0 L573 6.0 L574 6.0 L575 6.0 L576 6.0 L577 6.0 L578 6.0 L579 6.0 L580 6.0 L581 6.0 L582 6.0 L583 6.0 L584 6.0 L585 6.3 L586 6.6 L587 6.9 L588 7.2 L589 7.5 L590 7.9 L591 8.2 L592 7.5 L593 7.3 L594 7.0 L595 6.8 L596 6.6 L597 6.3 L598 6.1 L599 6.0 L600 6.0 L601 6.0 L602 6.0 L603 6.0 L604 6.0 L605 6.0 L606 6.0 L607 6.0 L608 6.0 L609 6.0 L610 6.0 L611 6.0 L612 6.0 L613 6.0 L614 6.0 L615 6.0 L616 6.0 L617 6.0 L618 6.0 L619 6.0 L620 6.0 L621 6.0 L622 6.0 L623 6.0 L624 6.0 L625 6.0 L626 6.0 L627 6.0 L628 6.0 L629 6.0 L630 6.1 L631 6.3 L632 6.6 L633 6.8 L634 7.0 L635 7.3 L636 7.5 L637 7.2 L638 6.9 L639 6.6 L640 6.4 L641 6.1 L642 6.0 L643 6.0 L644 6.0 L645 6.0 L646 6.0 L647 6.0 L648 6.0 L649 6.0 L650 6.0 L651 6.0 L652 6.0 L653 6.0 L654 6.0 L655 6.0 L656 6.0 L657 6.0 L658 6.0 L659 6.0 L660 6.0 L661 6.0 L662 6.0 L663 6.0 L664 6.0 L665 6.0 L666 6.0 L667 6.1 L668 6.4 L669 6.6 L670 6.9 L671 7.2 L672 9.5 L673 8.7 L674 7.9 L675 7.1 L676 6.4 L677 6.0 L678 6.0 L679 6.0 L680 6.0 L681 6.0 L682 6.0 L683 6.0 L684 6.0 L685 6.0 L686 6.0 L687 6.0 L688 6.0 L689 6.0 L690 6.0 L691 6.0 L692 6.0 L693 6.0 L694 6.0 L695 6.0 L696 6.0 L697 6.0 L698 6.4 L699 7.1 L700 7.9 L701 8.7 L702 13.0 L703 12.2 L704 11.3 L705 10.5 L706 9.7 L707 8.9 L708 8.1 L709 7.3 L710 6.5 L711 6.0 L712 6.0 L713 6.0 L714 6.0 L715 6.0 L716 6.0 L717 6.0 L718 6.0 L719 6.0 L720 6.0 L721 6.0 L722 6.0 L723 6.0 L724 6.0 L725 6.0 L726 6.0 L727 6.0 L728 6.0 L729 6.0 L730 6.0 L731 6.0 L732 6.0 L733 6.0 L734 6.0 L735 6.0 L736 6.0 L737 6.0 L738 6.0 L739 6.0 L740 6.0 L741 6.0 L742 6.0 L743 6.0 L744 6.0 L745 6.0 L746 6.0 L747 6.0 L748 6.0 L749 6.0 L750 6.0 L751 6.0 L752 6.5 L753 7.3 L754 8.1 L755 8.9 L756 9.7 L757 10.5 L758 11.3 L759 12.2 L760 13.0 L761 11.9 L762 10.9 L763 9.9 L764 8.8 L765 7.8 L766 6.9 L767 6.0 L768 6.0 L769 6.0 L770 6.0 L771 6.0 L772 6.0 L773 6.0 L774 6.0 L775 6.0 L776 6.0 L777 6.0 L778 6.0 L779 6.0 L780 6.0 L781 6.0 L782 6.0 L783 6.0 L784 6.0 L785 6.0 L786 6.0 L787 6.0 L788 6.0 L789 6.0 L790 6.0 L791 6.0 L792 6.0 L793 6.0 L794 6.0 L795 6.0 L796 6.0 L797 6.0 L798 6.0 L799 6.0 L800 6.9 L801 7.8 L802 8.8 L803 9.9 L804 10.9 L805 11.9 L806 8.0 L807 7.7 L808 7.4 L809 7.0 L810 6.7 L811 6.4 L812 6.1 L813 6.0 L814 6.0 L815 6.0 L816 6.0 L817 6.0 L818 6.0 L819 6.0 L820 6.0 L821 6.0 L822 6.0 L823 6.0 L824 6.0 L825 6.0 L826 6.0 L827 6.0 L828 6.0 L829 6.0 L830 6.0 L831 6.0 L832 6.0 L833 6.0 L834 6.0 L835 6.0 L836 6.0 L837 6.0 L838 6.0 L839 6.0 L840 6.0 L841 6.0 L842 6.0 L843 6.1 L844 6.4 L845 6.7 L846 7.0 L847 7.4 L848 7.7 L849 8.0 L850 7.6 L851 7.1 L852 6.7 L853 6.3 L854 6.0 L855 6.0 L856 6.0 L857 6.0 L858 6.0 L859 6.0 L860 6.0 L861 6.0 L862 6.0 L863 6.0 L864 6.0 L865 6.0 L866 6.0 L867 6.0 L868 6.0 L869 6.0 L870 6.0 L871 6.0 L872 6.0 L873 6.0 L874 6.0 L875 6.0 L876 6.0 L877 6.3 L878 6.7 L879 7.1 L880 7.6 L881 8.5 L882 8.0 L883 7.5 L884 7.0 L885 6.6 L886 6.1 L887 6.0 L888 6.0 L889 6.0 L890 6.0 L891 6.0 L892 6.0 L893 6.0 L894 6.0 L895 6.0 L896 6.0 L897 6.0 L898 6.0 L899 6.0 L900 6.0 L901 6.0 L902 6.0 L903 6.0 L904 6.0 L905 6.0 L906 6.0 L907 6.0 L908 6.0 L909 6.0 L910 6.0 L911 6.1 L912 6.6 L913 7.0 L914 7.5 L915 8.0 L916 13.0 L917 11.6 L918 10.2 L919 8.8 L920 7.4 L921 6.1 L922 6.0 L923 6.0 L924 6.0 L925 6.0 L926 6.0 L927 6.0 L928 6.0 L929 6.0 L930 6.0 L931 6.0 L932 6.0 L933 6.0 L934 6.0 L935 6.0 L936 6.0 L937 6.0 L938 6.0 L939 6.0 L940 6.0 L941 6.0 L942 6.0 L943 6.0 L944 6.0 L945 6.1 L946 7.4 L946 29.6 L945 30.8 L944 31.0 L943 31.0 L942 31.0 L941 31.0 L940 31.0 L939 31.0 L938 31.0 L937 31.0 L936 31.0 L935 31.0 L934 31.0 L933 31.0 L932 31.0 L931 31.0 L930 31.0 L929 31.0 L928 31.0 L927 31.0 L926 31.0 L925 31.0 L924 31.0 L923 31.0 L922 31.0 L921 30.8 L920 29.6 L919 28.4 L918 27.1 L917 25.8 L916 24.5 L915 29.1 L914 29.6 L913 30.0 L912 30.4 L911 30.9 L910 31.0 L909 31.0 L908 31.0 L907 31.0 L906 31.0 L905 31.0 L904 31.0 L903 31.0 L902 31.0 L901 31.0 L900 31.0 L899 31.0 L898 31.0 L897 31.0 L896 31.0 L895 31.0 L894 31.0 L893 31.0 L892 31.0 L891 31.0 L890 31.0 L889 31.0 L888 31.0 L887 31.0 L886 30.9 L885 30.4 L884 30.0 L883 29.6 L882 29.1 L881 28.7 L880 29.5 L879 29.9 L878 30.3 L877 30.7 L876 31.0 L875 31.0 L874 31.0 L873 31.0 L872 31.0 L871 31.0 L870 31.0 L869 31.0 L868 31.0 L867 31.0 L866 31.0 L865 31.0 L864 31.0 L863 31.0 L862 31.0 L861 31.0 L860 31.0 L859 31.0 L858 31.0 L857 31.0 L856 31.0 L855 31.0 L854 31.0 L853 30.7 L852 30.3 L851 29.9 L850 29.5 L849 29.1 L848 29.4 L847 29.7 L846 30.0 L845 30.3 L844 30.6 L843 30.8 L842 31.0 L841 31.0 L840 31.0 L839 31.0 L838 31.0 L837 31.0 L836 31.0 L835 31.0 L834 31.0 L833 31.0 L832 31.0 L831 31.0 L830 31.0 L829 31.0 L828 31.0 L827 31.0 L826 31.0 L825 31.0 L824 31.0 L823 31.0 L822 31.0 L821 31.0 L820 31.0 L819 31.0 L818 31.0 L817 31.0 L816 31.0 L815 31.0 L814 31.0 L813 31.0 L812 30.8 L811 30.6 L810 30.3 L809 30.0 L808 29.7 L807 29.4 L806 29.1 L805 25.5 L804 26.4 L803 27.4 L802 28.3 L801 29.3 L800 30.2 L799 31.0 L798 31.0 L797 31.0 L796 31.0 L795 31.0 L794 31.0 L793 31.0 L792 31.0 L791 31.0 L790 31.0 L789 31.0 L788 31.0 L787 31.0 L786 31.0 L785 31.0 L784 31.0 L783 31.0 L782 31.0 L781 31.0 L780 31.0 L779 31.0 L778 31.0 L777 31.0 L776 31.0 L775 31.0 L774 31.0 L773 31.0 L772 31.0 L771 31.0 L770 31.0 L769 31.0 L768 31.0 L767 31.0 L766 30.2 L765 29.3 L764 28.3 L763 27.4 L762 26.4 L761 25.5 L760 24.5 L759 25.3 L758 26.1 L757 26.8 L756 27.6 L755 28.3 L754 29.0 L753 29.8 L752 30.5 L751 31.0 L750 31.0 L749 31.0 L748 31.0 L747 31.0 L746 31.0 L745 31.0 L744 31.0 L743 31.0 L742 31.0 L741 31.0 L740 31.0 L739 31.0 L738 31.0 L737 31.0 L736 31.0 L735 31.0 L734 31.0 L733 31.0 L732 31.0 L731 31.0 L730 31.0 L729 31.0 L728 31.0 L727 31.0 L726 31.0 L725 31.0 L724 31.0 L723 31.0 L722 31.0 L721 31.0 L720 31.0 L719 31.0 L718 31.0 L717 31.0 L716 31.0 L715 31.0 L714 31.0 L713 31.0 L712 31.0 L711 31.0 L710 30.5 L709 29.8 L708 29.0 L707 28.3 L706 27.6 L705 26.8 L704 26.1 L703 25.3 L702 24.5 L701 28.5 L700 29.2 L699 29.9 L698 30.6 L697 31.0 L696 31.0 L695 31.0 L694 31.0 L693 31.0 L692 31.0 L691 31.0 L690 31.0 L689 31.0 L688 31.0 L687 31.0 L686 31.0 L685 31.0 L684 31.0 L683 31.0 L682 31.0 L681 31.0 L680 31.0 L679 31.0 L678 31.0 L677 31.0 L676 30.6 L675 29.9 L674 29.2 L673 28.5 L672 27.7 L671 29.8 L670 30.1 L669 30.4 L668 30.6 L667 30.9 L666 31.0 L665 31.0 L664 31.0 L663 31.0 L662 31.0 L661 31.0 L660 31.0 L659 31.0 L658 31.0 L657 31.0 L656 31.0 L655 31.0 L654 31.0 L653 31.0 L652 31.0 L651 31.0 L650 31.0 L649 31.0 L648 31.0 L647 31.0 L646 31.0 L645 31.0 L644 31.0 L643 31.0 L642 31.0 L641 30.9 L640 30.6 L639 30.4 L638 30.1 L637 29.8 L636 29.6 L635 29.8 L634 30.0 L633 30.2 L632 30.4 L631 30.6 L630 30.8 L629 31.0 L628 31.0 L627 31.0 L626 31.0 L625 31.0 L624 31.0 L623 31.0 L622 31.0 L621 31.0 L620 31.0 L619 31.0 L618 31.0 L617 31.0 L616 31.0 L615 31.0 L614 31.0 L613 31.0 L612 31.0 L611 31.0 L610 31.0 L609 31.0 L608 31.0 L607 31.0 L606 31.0 L605 31.0 L604 31.0 L603 31.0 L602 31.0 L601 31.0 L600 31.0 L599 31.0 L598 30.8 L597 30.6 L596 30.4 L595 30.2 L594 30.0 L593 29.8 L592 29.6 L591 29.0 L590 29.2 L589 29.5 L588 29.8 L587 30.1 L586 30.4 L585 30.7 L584 30.9 L583 31.0 L582 31.0 L581 31.0 L580 31.0 L579 31.0 L578 31.0 L577 31.0 L576 31.0 L575 31.0 L574 31.0 L573 31.0 L572 31.0 L571 31.0 L570 31.0 L569 31.0 L568 31.0 L567 31.0 L566 31.0 L565 31.0 L564 31.0 L563 31.0 L562 31.0 L561 31.0 L560 31.0 L559 31.0 L558 31.0 L557 31.0 L556 31.0 L555 31.0 L554 31.0 L553 31.0 L552 31.0 L551 31.0 L550 31.0 L549 31.0 L548 31.0 L547 31.0 L546 30.9 L545 30.7 L544 30.4 L543 30.1 L542 29.8 L541 29.5 L540 29.2 L539 29.0 L538 28.7 L537 25.5 L536 26.5 L535 27.5 L534 28.4 L533 29.4 L532 30.3 L531 31.0 L530 31.0 L529 31.0 L528 31.0 L527 31.0 L526 31.0 L525 31.0 L524 31.0 L523 31.0 L522 31.0 L521 31.0 L520 31.0 L519 31.0 L518 31.0 L517 31.0 L516 31.0 L515 31.0 L514 31.0 L513 31.0 L512 31.0 L511 31.0 L510 31.0 L509 31.0 L508 31.0 L507 31.0 L506 31.0 L505 31.0 L504 31.0 L503 31.0 L502 31.0 L501 31.0 L500 31.0 L499 30.3 L498 29.4 L497 28.4 L496 27.5 L495 26.5 L494 25.5 L493 24.5 L492 29.3 L491 29.6 L490 29.8 L489 30.0 L488 30.2 L487 30.5 L486 30.7 L485 30.9 L484 31.0 L483 31.0 L482 31.0 L481 31.0 L480 31.0 L479 31.0 L478 31.0 L477 31.0 L476 31.0 L475 31.0 L474 31.0 L473 31.0 L472 31.0 L471 31.0 L470 31.0 L469 31.0 L468 31.0 L467 31.0 L466 31.0 L465 31.0 L464 31.0 L463 31.0 L462 31.0 L461 31.0 L460 31.0 L459 31.0 L458 31.0 L457 31.0 L456 31.0 L455 31.0 L454 31.0 L453 31.0 L452 31.0 L451 31.0 L450 31.0 L449 31.0 L448 31.0 L447 31.0 L446 31.0 L445 30.9 L444 30.7 L443 30.5 L442 30.2 L441 30.0 L440 29.8 L439 29.6 L438 29.3 L437 29.1 L436 29.9 L435 30.3 L434 30.6 L433 30.9 L432 31.0 L431 31.0 L430 31.0 L429 31.0 L428 31.0 L427 31.0 L426 31.0 L425 31.0 L424 31.0 L423 31.0 L422 31.0 L421 31.0 L420 31.0 L419 31.0 L418 31.0 L417 31.0 L416 31.0 L415 31.0 L414 31.0 L413 30.9 L412 30.6 L411 30.3 L410 29.9 L409 29.6 L408 29.3 L407 29.5 L406 29.8 L405 30.0 L404 30.2 L403 30.4 L402 30.6 L401 30.8 L400 31.0 L399 31.0 L398 31.0 L397 31.0 L396 31.0 L395 31.0 L394 31.0 L393 31.0 L392 31.0 L391 31.0 L390 31.0 L389 31.0 L388 31.0 L387 31.0 L386 31.0 L385 31.0 L384 31.0 L383 31.0 L382 31.0 L381 31.0 L380 31.0 L379 31.0 L378 31.0 L377 31.0 L376 31.0 L375 31.0 L374 31.0 L373 31.0 L372 31.0 L371 31.0 L370 31.0 L369 31.0 L368 31.0 L367 31.0 L366 31.0 L365 31.0 L364 31.0 L363 31.0 L362 31.0 L361 31.0 L360 31.0 L359 31.0 L358 31.0 L357 30.8 L356 30.6 L355 30.4 L354 30.2 L353 30.0 L352 29.8 L351 29.5 L350 29.3 L349 29.1 L348 29.4 L347 29.6 L346 29.9 L345 30.2 L344 30.4 L343 30.7 L342 30.9 L341 31.0 L340 31.0 L339 31.0 L338 31.0 L337 31.0 L336 31.0 L335 31.0 L334 31.0 L333 31.0 L332 31.0 L331 31.0 L330 31.0 L329 31.0 L328 31.0 L327 31.0 L326 31.0 L325 31.0 L324 31.0 L323 31.0 L322 31.0 L321 31.0 L320 31.0 L319 31.0 L318 31.0 L317 31.0 L316 31.0 L315 31.0 L314 31.0 L313 31.0 L312 31.0 L311 31.0 L310 31.0 L309 31.0 L308 30.9 L307 30.7 L306 30.4 L305 30.2 L304 29.9 L303 29.6 L302 29.4 L301 29.1 L300 29.9 L299 30.2 L298 30.5 L297 30.8 L296 31.0 L295 31.0 L294 31.0 L293 31.0 L292 31.0 L291 31.0 L290 31.0 L289 31.0 L288 31.0 L287 31.0 L286 31.0 L285 31.0 L284 31.0 L283 31.0 L282 31.0 L281 31.0 L280 31.0 L279 31.0 L278 31.0 L277 31.0 L276 31.0 L275 31.0 L274 30.8 L273 30.5 L272 30.2 L271 29.9 L270 29.6 L269 28.6 L268 29.1 L267 29.5 L266 29.9 L265 30.3 L264 30.7 L263 31.0 L262 31.0 L261 31.0 L260 31.0 L259 31.0 L258 31.0 L257 31.0 L256 31.0 L255 31.0 L254 31.0 L253 31.0 L252 31.0 L251 31.0 L250 31.0 L249 31.0 L248 31.0 L247 31.0 L246 31.0 L245 31.0 L244 31.0 L243 31.0 L242 31.0 L241 31.0 L240 31.0 L239 31.0 L238 31.0 L237 31.0 L236 31.0 L235 31.0 L234 31.0 L233 31.0 L232 30.7 L231 30.3 L230 29.9 L229 29.5 L228 29.1 L227 28.6 L226 28.2 L225 29.5 L224 29.9 L223 30.2 L222 30.6 L221 30.9 L220 31.0 L219 31.0 L218 31.0 L217 31.0 L216 31.0 L215 31.0 L214 31.0 L213 31.0 L212 31.0 L211 31.0 L210 31.0 L209 31.0 L208 31.0 L207 31.0 L206 31.0 L205 31.0 L204 31.0 L203 31.0 L202 31.0 L201 31.0 L200 31.0 L199 31.0 L198 31.0 L197 30.9 L196 30.6 L195 30.2 L194 29.9 L193 29.5 L192 29.1 L191 29.4 L190 29.7 L189 30.0 L188 30.3 L187 30.6 L186 30.8 L185 31.0 L184 31.0 L183 31.0 L182 31.0 L181 31.0 L180 31.0 L179 31.0 L178 31.0 L177 31.0 L176 31.0 L175 31.0 L174 31.0 L173 31.0 L172 31.0 L171 31.0 L170 31.0 L169 31.0 L168 31.0 L167 31.0 L166 31.0 L165 31.0 L164 31.0 L163 31.0 L162 31.0 L161 31.0 L160 31.0 L159 31.0 L158 31.0 L157 31.0 L156 31.0 L155 30.8 L154 30.6 L153 30.3 L152 30.0 L151 29.7 L150 29.4 L149 29.1 L148 28.5 L147 28.8 L146 29.1 L145 29.5 L144 29.8 L143 30.1 L142 30.4 L141 30.7 L140 31.0 L139 31.0 L138 31.0 L137 31.0 L136 31.0 L135 31.0 L134 31.0 L133 31.0 L132 31.0 L131 31.0 L130 31.0 L129 31.0 L128 31.0 L127 31.0 L126 31.0 L125 31.0 L124 31.0 L123 31.0 L122 31.0 L121 31.0 L120 31.0 L119 31.0 L118 31.0 L117 31.0 L116 31.0 L115 31.0 L114 31.0 L113 31.0 L112 31.0 L111 31.0 L110 31.0 L109 31.0 L108 31.0 L107 31.0 L106 31.0 L105 31.0 L104 31.0 L103 31.0 L102 31.0 L101 31.0 L100 31.0 L99 31.0 L98 31.0 L97 30.7 L96 30.4 L95 30.1 L94 29.8 L93 29.5 L92 29.1 L91 28.8 L90 28.5 L89 28.2 L88 29.1 L87 29.5 L86 29.9 L85 30.3 L84 30.6 L83 31.0 L82 31.0 L81 31.0 L80 31.0 L79 31.0 L78 31.0 L77 31.0 L76 31.0 L75 31.0 L74 31.0 L73 31.0 L72 31.0 L71 31.0 L70 31.0 L69 31.0 L68 31.0 L67 31.0 L66 31.0 L65 31.0 L64 31.0 L63 31.0 L62 31.0 L61 31.0 L60 31.0 L59 31.0 L58 31.0 L57 31.0 L56 31.0 L55 30.6 L54 30.3 L53 29.9 L52 29.5 L51 29.1 L50 28.7 L49 29.0 L48 29.3 L47 29.6 L46 29.9 L45 30.2 L44 30.5 L43 30.8 L42 31.0 L41 31.0 L40 31.0 L39 31.0 L38 31.0 L37 31.0 L36 31.0 L35 31.0 L34 31.0 L33 31.0 L32 31.0 L31 31.0 L30 31.0 L29 31.0 L28 31.0 L27 31.0 L26 31.0 L25 31.0 L24 31.0 L23 31.0 L22 31.0 L21 31.0 L20 31.0 L19 31.0 L18 31.0 L17 31.0 L16 31.0 L15 31.0 L14 31.0 L13 31.0 L12 31.0 L11 31.0 L10 31.0 L9 31.0 L8 31.0 L7 30.8 L6 30.5 L5 30.2 L4 29.9 L3 29.6 L2 29.3 L1 29.0 L0 28.7Z" fill="#72a8f6"/><path clip-path="url(#wc2)" d="M0.5 0v38 M3.5 0v38 M6.5 0v38 M9.5 0v38 M12.5 0v38 M15.5 0v38 M18.5 0v38 M21.5 0v38 M24.5 0v38 M27.5 0v38 M30.5 0v38 M33.5 0v38 M36.5 0v38 M39.5 0v38 M42.5 0v38 M45.5 0v38 M48.5 0v38 M51.5 0v38 M54.5 0v38 M57.5 0v38 M60.5 0v38 M63.5 0v38 M66.5 0v38 M69.5 0v38 M72.5 0v38 M75.5 0v38 M78.5 0v38 M81.5 0v38 M84.5 0v38 M87.5 0v38 M90.5 0v38 M93.5 0v38 M96.5 0v38 M99.5 0v38 M102.5 0v38 M105.5 0v38 M108.5 0v38 M111.5 0v38 M114.5 0v38 M117.5 0v38 M120.5 0v38 M123.5 0v38 M126.5 0v38 M129.5 0v38 M132.5 0v38 M135.5 0v38 M138.5 0v38 M141.5 0v38 M144.5 0v38 M147.5 0v38 M150.5 0v38 M153.5 0v38 M156.5 0v38 M159.5 0v38 M162.5 0v38 M165.5 0v38 M168.5 0v38 M171.5 0v38 M174.5 0v38 M177.5 0v38 M180.5 0v38 M183.5 0v38 M186.5 0v38 M189.5 0v38 M192.5 0v38 M195.5 0v38 M198.5 0v38 M201.5 0v38 M204.5 0v38 M207.5 0v38 M210.5 0v38 M213.5 0v38 M216.5 0v38 M219.5 0v38 M222.5 0v38 M225.5 0v38 M228.5 0v38 M231.5 0v38 M234.5 0v38 M237.5 0v38 M240.5 0v38 M243.5 0v38 M246.5 0v38 M249.5 0v38 M252.5 0v38 M255.5 0v38 M258.5 0v38 M261.5 0v38 M264.5 0v38 M267.5 0v38 M270.5 0v38 M273.5 0v38 M276.5 0v38 M279.5 0v38 M282.5 0v38 M285.5 0v38 M288.5 0v38 M291.5 0v38 M294.5 0v38 M297.5 0v38 M300.5 0v38 M303.5 0v38 M306.5 0v38 M309.5 0v38 M312.5 0v38 M315.5 0v38 M318.5 0v38 M321.5 0v38 M324.5 0v38 M327.5 0v38 M330.5 0v38 M333.5 0v38 M336.5 0v38 M339.5 0v38 M342.5 0v38 M345.5 0v38 M348.5 0v38 M351.5 0v38 M354.5 0v38 M357.5 0v38 M360.5 0v38 M363.5 0v38 M366.5 0v38 M369.5 0v38 M372.5 0v38 M375.5 0v38 M378.5 0v38 M381.5 0v38 M384.5 0v38 M387.5 0v38 M390.5 0v38 M393.5 0v38 M396.5 0v38 M399.5 0v38 M402.5 0v38 M405.5 0v38 M408.5 0v38 M411.5 0v38 M414.5 0v38 M417.5 0v38 M420.5 0v38 M423.5 0v38 M426.5 0v38 M429.5 0v38 M432.5 0v38 M435.5 0v38 M438.5 0v38 M441.5 0v38 M444.5 0v38 M447.5 0v38 M450.5 0v38 M453.5 0v38 M456.5 0v38 M459.5 0v38 M462.5 0v38 M465.5 0v38 M468.5 0v38 M471.5 0v38 M474.5 0v38 M477.5 0v38 M480.5 0v38 M483.5 0v38 M486.5 0v38 M489.5 0v38 M492.5 0v38 M495.5 0v38 M498.5 0v38 M501.5 0v38 M504.5 0v38 M507.5 0v38 M510.5 0v38 M513.5 0v38 M516.5 0v38 M519.5 0v38 M522.5 0v38 M525.5 0v38 M528.5 0v38 M531.5 0v38 M534.5 0v38 M537.5 0v38 M540.5 0v38 M543.5 0v38 M546.5 0v38 M549.5 0v38 M552.5 0v38 M555.5 0v38 M558.5 0v38 M561.5 0v38 M564.5 0v38 M567.5 0v38 M570.5 0v38 M573.5 0v38 M576.5 0v38 M579.5 0v38 M582.5 0v38 M585.5 0v38 M588.5 0v38 M591.5 0v38 M594.5 0v38 M597.5 0v38 M600.5 0v38 M603.5 0v38 M606.5 0v38 M609.5 0v38 M612.5 0v38 M615.5 0v38 M618.5 0v38 M621.5 0v38 M624.5 0v38 M627.5 0v38 M630.5 0v38 M633.5 0v38 M636.5 0v38 M639.5 0v38 M642.5 0v38 M645.5 0v38 M648.5 0v38 M651.5 0v38 M654.5 0v38 M657.5 0v38 M660.5 0v38 M663.5 0v38 M666.5 0v38 M669.5 0v38 M672.5 0v38 M675.5 0v38 M678.5 0v38 M681.5 0v38 M684.5 0v38 M687.5 0v38 M690.5 0v38 M693.5 0v38 M696.5 0v38 M699.5 0v38 M702.5 0v38 M705.5 0v38 M708.5 0v38 M711.5 0v38 M714.5 0v38 M717.5 0v38 M720.5 0v38 M723.5 0v38 M726.5 0v38 M729.5 0v38 M732.5 0v38 M735.5 0v38 M738.5 0v38 M741.5 0v38 M744.5 0v38 M747.5 0v38 M750.5 0v38 M753.5 0v38 M756.5 0v38 M759.5 0v38 M762.5 0v38 M765.5 0v38 M768.5 0v38 M771.5 0v38 M774.5 0v38 M777.5 0v38 M780.5 0v38 M783.5 0v38 M786.5 0v38 M789.5 0v38 M792.5 0v38 M795.5 0v38 M798.5 0v38 M801.5 0v38 M804.5 0v38 M807.5 0v38 M810.5 0v38 M813.5 0v38 M816.5 0v38 M819.5 0v38 M822.5 0v38 M825.5 0v38 M828.5 0v38 M831.5 0v38 M834.5 0v38 M837.5 0v38 M840.5 0v38 M843.5 0v38 M846.5 0v38 M849.5 0v38 M852.5 0v38 M855.5 0v38 M858.5 0v38 M861.5 0v38 M864.5 0v38 M867.5 0v38 M870.5 0v38 M873.5 0v38 M876.5 0v38 M879.5 0v38 M882.5 0v38 M885.5 0v38 M888.5 0v38 M891.5 0v38 M894.5 0v38 M897.5 0v38 M900.5 0v38 M903.5 0v38 M906.5 0v38 M909.5 0v38 M912.5 0v38 M915.5 0v38 M918.5 0v38 M921.5 0v38 M924.5 0v38 M927.5 0v38 M930.5 0v38 M933.5 0v38 M936.5 0v38 M939.5 0v38 M942.5 0v38 M945.5 0v38" stroke="#5a96f2" stroke-width="0.8"/></g></svg>
</div>
<svg style="left:522px;top:881px" width="14" height="16"><path d="M4.5 13V3l8-2v10" fill="none" stroke="#b8d4fa" stroke-width="1.3"/><path d="M4.5 5.5l8-2" stroke="#b8d4fa" stroke-width="1.2"/><circle cx="2.8" cy="13.2" r="2" fill="none" stroke="#b8d4fa" stroke-width="1.2"/><circle cx="10.8" cy="11.2" r="2" fill="none" stroke="#b8d4fa" stroke-width="1.2"/></svg>
<svg style="left:936px;top:881px" width="14" height="16"><path d="M4.5 13V3l8-2v10" fill="none" stroke="#b8d4fa" stroke-width="1.3"/><path d="M4.5 5.5l8-2" stroke="#b8d4fa" stroke-width="1.2"/><circle cx="2.8" cy="13.2" r="2" fill="none" stroke="#b8d4fa" stroke-width="1.2"/><circle cx="10.8" cy="11.2" r="2" fill="none" stroke="#b8d4fa" stroke-width="1.2"/></svg>
<div class="a" style="left:548px;top:880px;font-size:16.8px;font-weight:bold;color:#fff;line-height:22px;white-space:nowrap">Sonic 3 Music- Hydrocity Zone Act 2.mp3</div>
<div class="a" style="left:962px;top:880px;font-size:16.8px;font-weight:bold;color:#fff;line-height:22px;white-space:nowrap">Sonic 3 Music- Hydrocity Zone Act 2.mp3</div>
<!--/TL-->
<div class="a" style="left:512px;top:785px;width:409px;height:75px;border-radius:5px;overflow:hidden;background:#b9a68e">
<svg style="left:0;top:0" width="409" height="75">
<defs><linearGradient id="sand" x1="0" y1="0" x2="1" y2="1"><stop offset="0" stop-color="#b8a88e"/><stop offset="1" stop-color="#a2907a"/></linearGradient></defs>
<rect width="409" height="75" fill="url(#sand)"/>
<path d="M19.7 75L73.5 14.6 82.5 10V75H57.8L66.8 50.4 41 75z" fill="#2a2826"/>
<rect x="57" y="21" width="8" height="9" fill="#c8c848"/><rect x="62" y="15.7" width="8" height="8" fill="#8ab0d8"/>
<path d="M98 75L155 14 165.4 6.7V75H138.5L149.7 50.4 125 75z" fill="#2a2826"/>
<rect x="142" y="13.4" width="11" height="7" fill="#e0d840"/><rect x="149.7" y="7.8" width="9" height="8" fill="#9ab8e0"/>
<path d="M262.5 0h12.3L274 75H226L245 35 258 22z" fill="#2e2c2a"/>
<rect x="239" y="37" width="12" height="10" rx="4" fill="#d8b090"/>
<path d="M293 0h33l2 20-6 12 1 43h-10l-3-40-5 40h-10l1-45-5-15z" fill="#2a2826"/>
<rect x="318" y="25" width="8" height="15" fill="#5070b0"/>
<path d="M342 0h28l-4 18 3 20 10 37h-14l-7-30-6 30h-12l4-42z" fill="#2a2826"/>
<path d="M394 22l15-6v14l-9 3z" fill="#2a2826"/>
<path d="M83 0v75M166 0v75M249 0v75M332 0v75" stroke="#a89680" stroke-width="0.6" opacity="0.5"/>
</svg>
<div class="a" style="left:25px;top:25px;width:25px;height:24px;border-radius:5px;background:rgba(60,58,64,.85)"></div>
<svg style="left:30px;top:30px" width="16" height="15"><path d="M1 5h3l4.5-3.5v12L4 10H1z" fill="none" stroke="#e8e8ec" stroke-width="1.1" stroke-linejoin="round"/><path d="M11 4.5a3.5 3.5 0 0 1 0 6M13 3a6 6 0 0 1 0 9" fill="none" stroke="#e8e8ec" stroke-width="1"/></svg>
</div>
<div class="a" style="left:926px;top:785px;width:275px;height:75px;border-radius:6px;overflow:hidden;background:#4fc3a0">
<svg style="left:0;top:0" width="275" height="75">
<defs><clipPath id="c2in"><rect x="3" y="3" width="269" height="69" rx="2"/></clipPath></defs>
<g clip-path="url(#c2in)">
<rect x="3" y="3" width="269" height="69" fill="url(#sand)"/>
<path d="M0 14L8 22 19.6 47 33 75H0z" fill="#2a2826"/>
<path d="M50 36l10-6 12 4 6 8-4 8-12 0z" fill="#2a2826"/><rect x="66" y="38" width="9" height="10" rx="3" fill="#d8b8a0"/><rect x="71" y="42" width="8" height="8" fill="#90b0d8"/>
<path d="M79 2h9L112 45 121 53 134 62 133 75H115L100 48 79 20z" fill="#2a2826"/>
<path d="M127 3h14l10 6 10 12 0 14-8 2-14-12-12-12z" fill="#2a2826"/><rect x="150" y="25" width="10" height="14" rx="3" fill="#d8c0a8"/>
<path d="M162 62l10 2 5 11h-15z" fill="#2a2826"/>
<path d="M207 6l18-3 12 8 4 14-4 12-12 2-8-10-12-6 2-10z" fill="#2a2826"/><rect x="232" y="18" width="11" height="14" rx="3" fill="#8ab0d8"/><rect x="230" y="30" width="8" height="7" rx="3" fill="#d08050"/>
<path d="M79 3v69M162 3v69" stroke="#9a8a74" stroke-width="0.6" opacity="0.5"/>
</g>
<rect x="3" y="3" width="17" height="69" fill="#3a9a80" opacity="0.72"/>
<rect x="254" y="3" width="18" height="69" fill="#3a9a80" opacity="0.72"/>
<path d="M9 29v17M14 29v17M262 29v17M267 29v17" stroke="#fff" stroke-width="2"/>
</svg>
<div class="a" style="left:25px;top:25px;width:25px;height:24px;border-radius:5px;background:rgba(60,58,64,.85)"></div>
<svg style="left:30px;top:30px" width="16" height="15"><path d="M1 5h3l4.5-3.5v12L4 10H1z" fill="none" stroke="#e8e8ec" stroke-width="1.1" stroke-linejoin="round"/><path d="M11 4.5a3.5 3.5 0 0 1 0 6M13 3a6 6 0 0 1 0 9" fill="none" stroke="#e8e8ec" stroke-width="1"/></svg>
</div>
<div class="a" style="left:926px;top:755px;width:196px;height:25px;border-radius:4px;background:#3d3b48;color:#fff;font-size:14.2px;font-weight:bold;line-height:28px;text-align:center;white-space:nowrap">VID_20211230_153832.mp4</div>
<div class="a" style="left:1307px;top:650px;width:3px;height:377px;background:#fff"></div>
<svg style="left:1300px;top:644px" width="17" height="17"><path d="M1 2a2 2 0 0 1 2-2h11a2 2 0 0 1 2 2v8l-7.5 6.5L1 10z" fill="#fff"/></svg>
<div class="a" style="left:492px;top:1015px;width:169px;height:10px;border-radius:5px;background:#55555f"></div>
<svg style="left:0;top:0" width="1919" height="1027"><path d="M125.5 607.5Q242 556 358 513.5Q363 511.5 363 516V557H590Q593 557 593 560V659.2H363V705Q242 661 125.5 607.5z" fill="#ec1c24"/></svg>

</body></html>
